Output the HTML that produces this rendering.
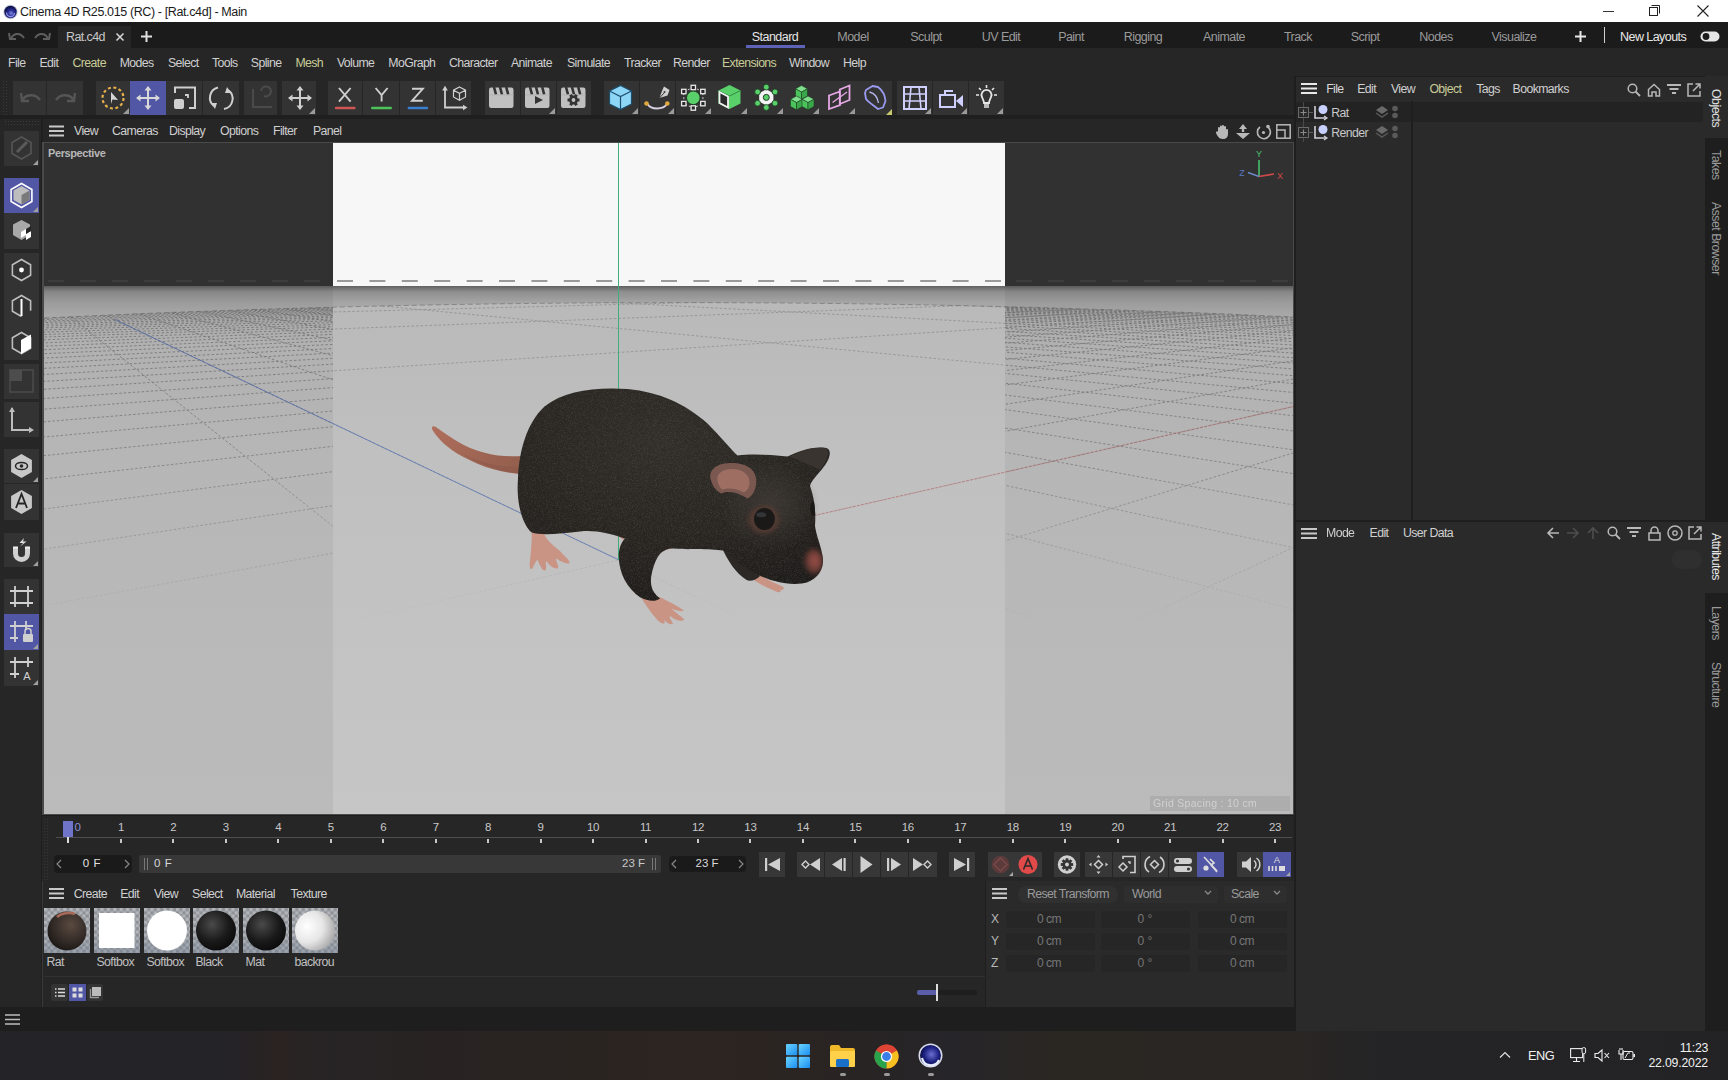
<!DOCTYPE html>
<html><head><meta charset="utf-8">
<style>
*{margin:0;padding:0;box-sizing:border-box}
html,body{width:1728px;height:1080px;overflow:hidden;background:#262626;font-family:"Liberation Sans",sans-serif;font-size:12px;color:#c8c8c8}
.a{position:absolute}
.t{position:absolute;white-space:nowrap;line-height:1}
svg{overflow:visible}
</style></head><body>

<div class="a" style="left:0px;top:0px;width:1728px;height:22px;background:#ffffff;"></div>
<svg class="a" style="left:2px;top:3px;" width="17" height="17" viewBox="0 0 17 17"><defs><radialGradient id="lg" cx="0.55" cy="0.6" r="0.55"><stop offset="0" stop-color="#8088e0"/><stop offset="0.45" stop-color="#2a2f98"/><stop offset="1" stop-color="#0c0f48"/></radialGradient></defs><circle cx="8.5" cy="9" r="7.2" fill="#c8cad8"/><circle cx="8.5" cy="9" r="6.2" fill="url(#lg)"/><path d="M4.5 9.5 A4 4 0 0 0 12.5 10" stroke="#aab0ff" stroke-width="1.3" fill="none" opacity="0.8"/></svg>
<div class="t" style="left:20px;top:5.5px;font-size:12.5px;letter-spacing:-0.38px;color:#1a1a1a;">Cinema 4D R25.015 (RC) - [Rat.c4d] - Main</div>
<div class="a" style="left:1603px;top:11px;width:11px;height:1px;background:#333;"></div>
<svg class="a" style="left:1649px;top:5px;" width="12" height="12" viewBox="0 0 12 12"><rect x="0.5" y="2.5" width="8" height="8" fill="none" stroke="#222" stroke-width="1"/><path d="M2.5 0.5 H10.5 V8.5" fill="none" stroke="#222" stroke-width="1"/></svg>
<svg class="a" style="left:1697px;top:5px;" width="12" height="12" viewBox="0 0 12 12"><path d="M0.5 0.5 L11.5 11.5 M11.5 0.5 L0.5 11.5" stroke="#222" stroke-width="1.1"/></svg>
<div class="a" style="left:0px;top:22px;width:1728px;height:26px;background:#1b1b1b;"></div>
<svg class="a" style="left:8px;top:31px;" width="18" height="10" viewBox="0 0 18 10"><path d="M3 8 C5 2, 12 1, 16 7" stroke="#5e5e5e" stroke-width="2" fill="none"/><path d="M1 2 L2 8 L8 8" stroke="#5e5e5e" stroke-width="2" fill="none"/></svg>
<svg class="a" style="left:33px;top:31px;" width="18" height="10" viewBox="0 0 18 10"><path d="M15 8 C13 2, 6 1, 2 7" stroke="#5e5e5e" stroke-width="2" fill="none"/><path d="M17 2 L16 8 L10 8" stroke="#5e5e5e" stroke-width="2" fill="none"/></svg>
<div class="a" style="left:58px;top:26px;width:73px;height:22px;background:#262626;"></div>
<div class="t" style="left:66px;top:30.5px;font-size:12.5px;letter-spacing:-0.6px;color:#c8c8c8;">Rat.c4d</div>
<svg class="a" style="left:116px;top:33px;" width="8" height="8" viewBox="0 0 8 8"><path d="M0.5 0.5 L7.5 7.5 M7.5 0.5 L0.5 7.5" stroke="#d8d8d8" stroke-width="1.5"/></svg>
<svg class="a" style="left:141px;top:31px;" width="11" height="11" viewBox="0 0 11 11"><path d="M5.5 0 V11 M0 5.5 H11" stroke="#e0e0e0" stroke-width="2"/></svg>
<div class="t" style="left:625px;width:300px;text-align:center;top:30.5px;font-size:12.5px;letter-spacing:-0.55px;color:#e6e6e6;">Standard</div>
<div class="t" style="left:703px;width:300px;text-align:center;top:30.5px;font-size:12.5px;letter-spacing:-0.55px;color:#9a9a9a;">Model</div>
<div class="t" style="left:776px;width:300px;text-align:center;top:30.5px;font-size:12.5px;letter-spacing:-0.55px;color:#9a9a9a;">Sculpt</div>
<div class="t" style="left:851px;width:300px;text-align:center;top:30.5px;font-size:12.5px;letter-spacing:-0.55px;color:#9a9a9a;">UV Edit</div>
<div class="t" style="left:921px;width:300px;text-align:center;top:30.5px;font-size:12.5px;letter-spacing:-0.55px;color:#9a9a9a;">Paint</div>
<div class="t" style="left:993px;width:300px;text-align:center;top:30.5px;font-size:12.5px;letter-spacing:-0.55px;color:#9a9a9a;">Rigging</div>
<div class="t" style="left:1074px;width:300px;text-align:center;top:30.5px;font-size:12.5px;letter-spacing:-0.55px;color:#9a9a9a;">Animate</div>
<div class="t" style="left:1148px;width:300px;text-align:center;top:30.5px;font-size:12.5px;letter-spacing:-0.55px;color:#9a9a9a;">Track</div>
<div class="t" style="left:1215px;width:300px;text-align:center;top:30.5px;font-size:12.5px;letter-spacing:-0.55px;color:#9a9a9a;">Script</div>
<div class="t" style="left:1286px;width:300px;text-align:center;top:30.5px;font-size:12.5px;letter-spacing:-0.55px;color:#9a9a9a;">Nodes</div>
<div class="t" style="left:1364px;width:300px;text-align:center;top:30.5px;font-size:12.5px;letter-spacing:-0.55px;color:#9a9a9a;">Visualize</div>
<div class="a" style="left:746px;top:45px;width:59px;height:3px;background:#5f63b8;"></div>
<svg class="a" style="left:1575px;top:31px;" width="11" height="11" viewBox="0 0 11 11"><path d="M5.5 0 V11 M0 5.5 H11" stroke="#e8e8e8" stroke-width="2"/></svg>
<div class="a" style="left:1604px;top:27px;width:1px;height:16px;background:#d0d0d0;"></div>
<div class="t" style="left:1620px;top:30.5px;font-size:12.5px;letter-spacing:-0.55px;color:#e8e8e8;">New Layouts</div>
<svg class="a" style="left:1700px;top:31px;" width="20" height="11" viewBox="0 0 20 11"><rect x="0.5" y="0.5" width="19" height="10" rx="5" fill="#e6e6e6"/><circle cx="6" cy="5.5" r="3.4" fill="#1b1b1b"/></svg>
<div class="a" style="left:0px;top:48px;width:1728px;height:71px;background:#262626;"></div>
<div class="t" style="left:8px;top:57.4px;font-size:12.3px;letter-spacing:-0.6px;color:#d0d0d0;">File</div>
<div class="t" style="left:39.5px;top:57.4px;font-size:12.3px;letter-spacing:-0.6px;color:#d0d0d0;">Edit</div>
<div class="t" style="left:72.6px;top:57.4px;font-size:12.3px;letter-spacing:-0.6px;color:#c9cc98;">Create</div>
<div class="t" style="left:119.7px;top:57.4px;font-size:12.3px;letter-spacing:-0.6px;color:#d0d0d0;">Modes</div>
<div class="t" style="left:168px;top:57.4px;font-size:12.3px;letter-spacing:-0.6px;color:#d0d0d0;">Select</div>
<div class="t" style="left:211.9px;top:57.4px;font-size:12.3px;letter-spacing:-0.6px;color:#d0d0d0;">Tools</div>
<div class="t" style="left:250.8px;top:57.4px;font-size:12.3px;letter-spacing:-0.6px;color:#d0d0d0;">Spline</div>
<div class="t" style="left:295.4px;top:57.4px;font-size:12.3px;letter-spacing:-0.6px;color:#c9cc98;">Mesh</div>
<div class="t" style="left:336.9px;top:57.4px;font-size:12.3px;letter-spacing:-0.6px;color:#d0d0d0;">Volume</div>
<div class="t" style="left:388.3px;top:57.4px;font-size:12.3px;letter-spacing:-0.6px;color:#d0d0d0;">MoGraph</div>
<div class="t" style="left:449px;top:57.4px;font-size:12.3px;letter-spacing:-0.6px;color:#d0d0d0;">Character</div>
<div class="t" style="left:511px;top:57.4px;font-size:12.3px;letter-spacing:-0.6px;color:#d0d0d0;">Animate</div>
<div class="t" style="left:567px;top:57.4px;font-size:12.3px;letter-spacing:-0.6px;color:#d0d0d0;">Simulate</div>
<div class="t" style="left:624px;top:57.4px;font-size:12.3px;letter-spacing:-0.6px;color:#d0d0d0;">Tracker</div>
<div class="t" style="left:673px;top:57.4px;font-size:12.3px;letter-spacing:-0.6px;color:#d0d0d0;">Render</div>
<div class="t" style="left:722px;top:57.4px;font-size:12.3px;letter-spacing:-0.6px;color:#c9cc98;">Extensions</div>
<div class="t" style="left:789px;top:57.4px;font-size:12.3px;letter-spacing:-0.6px;color:#d0d0d0;">Window</div>
<div class="t" style="left:843px;top:57.4px;font-size:12.3px;letter-spacing:-0.6px;color:#d0d0d0;">Help</div>
<svg class="a" style="left:2px;top:80px;" width="6" height="36" viewBox="0 0 6 36"><rect x="1" y="1" width="1" height="1" fill="#3a3a3a"/><rect x="1" y="4" width="1" height="1" fill="#3a3a3a"/><rect x="1" y="7" width="1" height="1" fill="#3a3a3a"/><rect x="1" y="10" width="1" height="1" fill="#3a3a3a"/><rect x="1" y="13" width="1" height="1" fill="#3a3a3a"/><rect x="1" y="16" width="1" height="1" fill="#3a3a3a"/><rect x="1" y="19" width="1" height="1" fill="#3a3a3a"/><rect x="1" y="22" width="1" height="1" fill="#3a3a3a"/><rect x="1" y="25" width="1" height="1" fill="#3a3a3a"/><rect x="1" y="28" width="1" height="1" fill="#3a3a3a"/><rect x="1" y="31" width="1" height="1" fill="#3a3a3a"/><rect x="1" y="34" width="1" height="1" fill="#3a3a3a"/><rect x="4" y="1" width="1" height="1" fill="#3a3a3a"/><rect x="4" y="4" width="1" height="1" fill="#3a3a3a"/><rect x="4" y="7" width="1" height="1" fill="#3a3a3a"/><rect x="4" y="10" width="1" height="1" fill="#3a3a3a"/><rect x="4" y="13" width="1" height="1" fill="#3a3a3a"/><rect x="4" y="16" width="1" height="1" fill="#3a3a3a"/><rect x="4" y="19" width="1" height="1" fill="#3a3a3a"/><rect x="4" y="22" width="1" height="1" fill="#3a3a3a"/><rect x="4" y="25" width="1" height="1" fill="#3a3a3a"/><rect x="4" y="28" width="1" height="1" fill="#3a3a3a"/><rect x="4" y="31" width="1" height="1" fill="#3a3a3a"/><rect x="4" y="34" width="1" height="1" fill="#3a3a3a"/></svg>
<div class="a" style="left:13px;top:81px;width:33px;height:34px;background:#333333;"></div>
<svg class="a" style="left:13px;top:81px;" width="33" height="34" viewBox="0 0 33 34"><path d="M9 20 C12 13, 22 12, 27 19" stroke="#555" stroke-width="2.4" fill="none"/><path d="M8 12 L9 20 L16 20" stroke="#555" stroke-width="2.4" fill="none"/></svg>
<div class="a" style="left:47px;top:81px;width:36px;height:34px;background:#333333;"></div>
<svg class="a" style="left:47px;top:81px;" width="36" height="34" viewBox="0 0 36 34"><path d="M27 20 C24 13, 14 12, 9 19" stroke="#555" stroke-width="2.4" fill="none"/><path d="M28 12 L27 20 L20 20" stroke="#555" stroke-width="2.4" fill="none"/></svg>
<div class="a" style="left:96px;top:81px;width:34px;height:34px;background:#333333;"></div>
<svg class="a" style="left:96px;top:81px;" width="34" height="34" viewBox="0 0 34 34"><circle cx="17" cy="17" r="10.5" stroke="#e8b04a" stroke-width="2.2" fill="none" stroke-dasharray="3 2.5"/><path d="M15 11 L22 19 L16.5 18.5 L15 23 Z" fill="#d6d6d6"/></svg>
<svg class="a" style="left:123px;top:108px;" width="6" height="6" viewBox="0 0 6 6"><path d="M6 0 V6 H0 Z" fill="#9a9a9a"/></svg>
<div class="a" style="left:130px;top:81px;width:36px;height:34px;background:#5257a5;"></div>
<svg class="a" style="left:130px;top:81px;" width="36" height="34" viewBox="0 0 36 34"><path d="M18 6 V28 M7 17 H29" stroke="#d8d8d8" stroke-width="2"/><path d="M18 5 L14.5 9.5 H21.5 Z M18 29 L14.5 24.5 H21.5 Z M6 17 L10.5 13.5 V20.5 Z M30 17 L25.5 13.5 V20.5 Z" fill="#d8d8d8"/></svg>
<div class="a" style="left:166px;top:81px;width:36px;height:34px;background:#333333;"></div>
<svg class="a" style="left:166px;top:81px;" width="36" height="34" viewBox="0 0 36 34"><path d="M9 12 V6.5 H29 V27 H23" stroke="#cfcfcf" stroke-width="2" fill="none"/><rect x="8" y="18" width="10" height="10" rx="2" fill="#cfcfcf"/><path d="M19 14 H22 V17" stroke="#cfcfcf" stroke-width="1.8" fill="none"/></svg>
<div class="a" style="left:203px;top:81px;width:36px;height:34px;background:#333333;"></div>
<svg class="a" style="left:203px;top:81px;" width="36" height="34" viewBox="0 0 36 34"><path d="M15 6.5 A10.5 10.5 0 0 0 11 25" stroke="#cfcfcf" stroke-width="2" fill="none"/><path d="M21 28 A10.5 10.5 0 0 0 25 9" stroke="#cfcfcf" stroke-width="2" fill="none"/><path d="M8 22 L12 28 L14 22 Z M28 12 L24 6 L22 12 Z" fill="#cfcfcf"/></svg>
<div class="a" style="left:244px;top:81px;width:33px;height:34px;background:#333333;"></div>
<svg class="a" style="left:244px;top:81px;" width="33" height="34" viewBox="0 0 33 34"><path d="M9 8 V26 H28" stroke="#4a4a4a" stroke-width="2" fill="none"/><path d="M20 15 A5 5 0 1 0 17 10" stroke="#4a4a4a" stroke-width="2" fill="none"/></svg>
<div class="a" style="left:282px;top:81px;width:34px;height:34px;background:#333333;"></div>
<svg class="a" style="left:282px;top:81px;" width="34" height="34" viewBox="0 0 34 34"><path d="M18 6 V28 M7 17 H29" stroke="#cfcfcf" stroke-width="2"/><path d="M18 5 L14.5 9.5 H21.5 Z M18 29 L14.5 24.5 H21.5 Z M6 17 L10.5 13.5 V20.5 Z M30 17 L25.5 13.5 V20.5 Z" fill="#cfcfcf"/></svg>
<svg class="a" style="left:309px;top:108px;" width="6" height="6" viewBox="0 0 6 6"><path d="M6 0 V6 H0 Z" fill="#9a9a9a"/></svg>
<div class="a" style="left:328px;top:81px;width:34px;height:34px;background:#333333;"></div>
<svg class="a" style="left:328px;top:81px;" width="34" height="34" viewBox="0 0 34 34"><path d="M11 7 L22.6 20.6 M22.6 7 L11 20.6" stroke="#cfcfcf" stroke-width="1.9"/><rect x="6.8" y="25.8" width="20.8" height="2.4" rx="1.2" fill="#d05656"/></svg>
<div class="a" style="left:363px;top:81px;width:36px;height:34px;background:#333333;"></div>
<svg class="a" style="left:363px;top:81px;" width="36" height="34" viewBox="0 0 36 34"><path d="M12.6 7 L18.6 14 L24.6 7 M18.6 14 V20.6" stroke="#cfcfcf" stroke-width="1.9" fill="none"/><rect x="8" y="25.8" width="21" height="2.4" rx="1.2" fill="#4cc45a"/></svg>
<div class="a" style="left:400px;top:81px;width:35px;height:34px;background:#333333;"></div>
<svg class="a" style="left:400px;top:81px;" width="35" height="34" viewBox="0 0 35 34"><path d="M12 7.8 H22.8 L12 19.8 H22.8" stroke="#cfcfcf" stroke-width="1.9" fill="none"/><rect x="7.6" y="25.8" width="20.6" height="2.4" rx="1.2" fill="#3a7ed0"/></svg>
<div class="a" style="left:436px;top:81px;width:35px;height:34px;background:#333333;"></div>
<svg class="a" style="left:436px;top:81px;" width="35" height="34" viewBox="0 0 35 34"><path d="M9 7 V26.5 H29" stroke="#cfcfcf" stroke-width="1.8" fill="none"/><path d="M6.2 9.5 L9 4.8 L11.8 9.5 Z M27 23.7 L31.5 26.5 L27 29.3 Z" fill="#cfcfcf"/><path d="M23.5 6 L29.5 9.2 V16 L23.5 19.2 L17.5 16 V9.2 Z M17.5 9.2 L23.5 12.4 L29.5 9.2 M23.5 12.4 V19.2" stroke="#cfcfcf" stroke-width="1.2" fill="none"/></svg>
<div class="a" style="left:485px;top:81px;width:35px;height:34px;background:#333333;"></div>
<svg class="a" style="left:485px;top:81px;" width="35" height="34" viewBox="0 0 35 34"><rect x="4" y="6.5" width="24.5" height="20.5" rx="2.2" fill="#c0c0c0"/><path d="M9 6 L11 13.5 M15 6 L17 13.5 M21.2 6 L23.2 13.5" stroke="#333" stroke-width="2.6"/><rect x="4" y="13.5" width="24.5" height="0.8" fill="#b0b0b0"/></svg>
<div class="a" style="left:521px;top:81px;width:35px;height:34px;background:#333333;"></div>
<svg class="a" style="left:521px;top:81px;" width="35" height="34" viewBox="0 0 35 34"><rect x="4" y="6.5" width="24.5" height="20.5" rx="2.2" fill="#c0c0c0"/><path d="M9 6 L11 13.5 M15 6 L17 13.5 M21.2 6 L23.2 13.5" stroke="#333" stroke-width="2.6"/><rect x="4" y="13.5" width="24.5" height="0.8" fill="#b0b0b0"/><path d="M14 15 L22 19 L14 23 Z" fill="#333"/></svg>
<svg class="a" style="left:549px;top:108px;" width="6" height="6" viewBox="0 0 6 6"><path d="M6 0 V6 H0 Z" fill="#9a9a9a"/></svg>
<div class="a" style="left:557px;top:81px;width:34px;height:34px;background:#333333;"></div>
<svg class="a" style="left:557px;top:81px;" width="34" height="34" viewBox="0 0 34 34"><rect x="4" y="6.5" width="24.5" height="20.5" rx="2.2" fill="#c0c0c0"/><path d="M9 6 L11 13.5 M15 6 L17 13.5 M21.2 6 L23.2 13.5" stroke="#333" stroke-width="2.6"/><rect x="4" y="13.5" width="24.5" height="0.8" fill="#b0b0b0"/><rect x="15" y="13" width="3" height="12" fill="#333" transform="rotate(30 16.5 19)"/><rect x="15" y="13" width="3" height="12" fill="#333" transform="rotate(90 16.5 19)"/><rect x="15" y="13" width="3" height="12" fill="#333" transform="rotate(150 16.5 19)"/><circle cx="16.5" cy="19" r="4.5" fill="#333"/><circle cx="16.5" cy="19" r="1.9" fill="#c0c0c0"/></svg>
<div class="a" style="left:604px;top:81px;width:35px;height:34px;background:#333333;"></div>
<svg class="a" style="left:604px;top:81px;" width="35" height="34" viewBox="0 0 35 34"><path d="M16.5 4.5 L27.5 10 V23 L16.5 28.5 L5.5 23 V10 Z" fill="#8ed6f6" stroke="#1d4e6e" stroke-width="1.2"/><path d="M5.5 10 L16.5 15.5 L27.5 10 M16.5 15.5 V28.5" stroke="#1d4e6e" stroke-width="1.2" fill="none"/></svg>
<svg class="a" style="left:632px;top:108px;" width="6" height="6" viewBox="0 0 6 6"><path d="M6 0 V6 H0 Z" fill="#9a9a9a"/></svg>
<div class="a" style="left:640px;top:81px;width:35px;height:34px;background:#333333;"></div>
<svg class="a" style="left:640px;top:81px;" width="35" height="34" viewBox="0 0 35 34"><path d="M7.5 23 C11 29, 23 29, 27 23" stroke="#d8d0e0" stroke-width="1.8" fill="none"/><circle cx="6.5" cy="22.5" r="2.3" fill="#e0a83c"/><circle cx="27.3" cy="22.5" r="2.3" fill="#e0a83c"/><path d="M24 5.5 L29.5 9 L27.5 14.5 L19.5 17 L22 10 Z" fill="#d0d0d0"/><path d="M19.5 17 L24.5 11.5" stroke="#333" stroke-width="1"/><circle cx="24.5" cy="11" r="1" fill="#333"/></svg>
<svg class="a" style="left:668px;top:108px;" width="6" height="6" viewBox="0 0 6 6"><path d="M6 0 V6 H0 Z" fill="#9a9a9a"/></svg>
<div class="a" style="left:676px;top:81px;width:36px;height:34px;background:#333333;"></div>
<svg class="a" style="left:676px;top:81px;" width="36" height="34" viewBox="0 0 36 34"><polygon points="17.3,6.5 26.9,10.5 26.9,22.6 17.3,27 7.8,22.6 7.8,10.5" fill="none" stroke="#cfcfcf" stroke-width="1" stroke-dasharray="2 2"/><circle cx="17.3" cy="16.8" r="6.8" fill="#5ad06a" stroke="#1e3a22" stroke-width="1"/><rect x="15.1" y="4.3" width="4.4" height="4.4" fill="#262626" stroke="#e8e8e8" stroke-width="1.3"/><rect x="24.7" y="8.3" width="4.4" height="4.4" fill="#262626" stroke="#e8e8e8" stroke-width="1.3"/><rect x="24.7" y="20.4" width="4.4" height="4.4" fill="#262626" stroke="#e8e8e8" stroke-width="1.3"/><rect x="15.1" y="24.8" width="4.4" height="4.4" fill="#262626" stroke="#e8e8e8" stroke-width="1.3"/><rect x="5.6" y="20.4" width="4.4" height="4.4" fill="#262626" stroke="#e8e8e8" stroke-width="1.3"/><rect x="5.6" y="8.3" width="4.4" height="4.4" fill="#262626" stroke="#e8e8e8" stroke-width="1.3"/></svg>
<svg class="a" style="left:705px;top:108px;" width="6" height="6" viewBox="0 0 6 6"><path d="M6 0 V6 H0 Z" fill="#9a9a9a"/></svg>
<div class="a" style="left:712px;top:81px;width:36px;height:34px;background:#333333;"></div>
<svg class="a" style="left:712px;top:81px;" width="36" height="34" viewBox="0 0 36 34"><path d="M17.5 4 L28.5 9.5 V22.5 L17.5 28 L6.5 22.5 V9.5 Z" fill="#5ad06a"/><path d="M6.5 9.5 L17.5 15 L28.5 9.5" stroke="#2e8a3e" stroke-width="1" fill="none"/><path d="M7.5 11 L16 15.5 V26.5 L7.5 22 Z" fill="#2a2a2a" stroke="#f0f0f0" stroke-width="1.8"/></svg>
<svg class="a" style="left:741px;top:108px;" width="6" height="6" viewBox="0 0 6 6"><path d="M6 0 V6 H0 Z" fill="#9a9a9a"/></svg>
<div class="a" style="left:748px;top:81px;width:36px;height:34px;background:#333333;"></div>
<svg class="a" style="left:748px;top:81px;" width="36" height="34" viewBox="0 0 36 34"><polygon points="25.4,20.5 18.3,24.6 11.2,20.5 11.2,12.3 18.3,8.2 25.4,12.3" fill="#f4f4f4"/><circle cx="18.3" cy="6.1" r="2.9" fill="#5ad06a" stroke="#1e3a22" stroke-width="0.8"/><circle cx="27" cy="10.9" r="2.9" fill="#5ad06a" stroke="#1e3a22" stroke-width="0.8"/><circle cx="27" cy="22.2" r="2.9" fill="#5ad06a" stroke="#1e3a22" stroke-width="0.8"/><circle cx="18.3" cy="26.5" r="2.9" fill="#5ad06a" stroke="#1e3a22" stroke-width="0.8"/><circle cx="9.6" cy="22.2" r="2.9" fill="#5ad06a" stroke="#1e3a22" stroke-width="0.8"/><circle cx="9.6" cy="10.9" r="2.9" fill="#5ad06a" stroke="#1e3a22" stroke-width="0.8"/><circle cx="18.3" cy="16.4" r="3" fill="#5ad06a" stroke="#1e3a22" stroke-width="1"/></svg>
<svg class="a" style="left:777px;top:108px;" width="6" height="6" viewBox="0 0 6 6"><path d="M6 0 V6 H0 Z" fill="#9a9a9a"/></svg>
<div class="a" style="left:784px;top:81px;width:36px;height:34px;background:#333333;"></div>
<svg class="a" style="left:784px;top:81px;" width="36" height="34" viewBox="0 0 36 34"><g stroke="#1e3a22" stroke-width="0.6"><path d="M17.5 4.5 L23.5 7.8 L17.5 11.1 L11.5 7.8 Z" fill="#7ee08c"/><path d="M11.5 7.8 L17.5 11.1 V18.3 L11.5 15.0 Z" fill="#4cc45c"/><path d="M17.5 11.1 L23.5 7.8 V15.0 L17.5 18.3 Z" fill="#3aa84a"/><path d="M12.5 15.0 L18.5 18.3 L12.5 21.6 L6.5 18.3 Z" fill="#7ee08c"/><path d="M6.5 18.3 L12.5 21.6 V28.8 L6.5 25.5 Z" fill="#4cc45c"/><path d="M12.5 21.6 L18.5 18.3 V25.5 L12.5 28.8 Z" fill="#3aa84a"/><path d="M24.0 15.0 L30.0 18.3 L24.0 21.6 L18.0 18.3 Z" fill="#7ee08c"/><path d="M18.0 18.3 L24.0 21.6 V28.8 L18.0 25.5 Z" fill="#4cc45c"/><path d="M24.0 21.6 L30.0 18.3 V25.5 L24.0 28.8 Z" fill="#3aa84a"/></g></svg>
<svg class="a" style="left:813px;top:108px;" width="6" height="6" viewBox="0 0 6 6"><path d="M6 0 V6 H0 Z" fill="#9a9a9a"/></svg>
<div class="a" style="left:820px;top:81px;width:36px;height:34px;background:#333333;"></div>
<svg class="a" style="left:820px;top:81px;" width="36" height="34" viewBox="0 0 36 34"><path d="M9 14.5 L20 10.5 V24 L9 28 Z M19.8 8.5 L29.5 4.5 V19 L19.8 23 Z" fill="none" stroke="#e6a8e6" stroke-width="1.8"/><path d="M12.5 21.5 L27 11" stroke="#e6a8e6" stroke-width="1.3"/></svg>
<svg class="a" style="left:849px;top:108px;" width="6" height="6" viewBox="0 0 6 6"><path d="M6 0 V6 H0 Z" fill="#9a9a9a"/></svg>
<div class="a" style="left:856px;top:81px;width:36px;height:34px;background:#333333;"></div>
<svg class="a" style="left:856px;top:81px;" width="36" height="34" viewBox="0 0 36 34"><path d="M10 9 L16.5 5 L22 6 C26 9, 29 14, 29.5 20 L27 26.5 L22 28 C17 24, 12 21, 10 18 L9 12 Z" fill="none" stroke="#9a9af0" stroke-width="1.8" stroke-linejoin="round"/><path d="M13.5 11 C18 12, 21.5 16, 22.5 22" stroke="#b8b8f0" stroke-width="1.3" fill="none"/></svg>
<svg class="a" style="left:886px;top:109px;" width="6" height="6" viewBox="0 0 6 6"><path d="M6 0 V6 H0 Z" fill="#c8c870"/></svg>
<div class="a" style="left:897px;top:81px;width:35px;height:34px;background:#333333;"></div>
<svg class="a" style="left:897px;top:81px;" width="35" height="34" viewBox="0 0 35 34"><path d="M7 6 H29 V28 H7 Z" fill="none" stroke="#d0d0ff" stroke-width="2"/><path d="M7 13 H29 M7 20 H29 M14 6 L12 28 M22 6 L24 28" stroke="#d0d0ff" stroke-width="1.6"/></svg>
<svg class="a" style="left:925px;top:108px;" width="6" height="6" viewBox="0 0 6 6"><path d="M6 0 V6 H0 Z" fill="#9a9a9a"/></svg>
<div class="a" style="left:933px;top:81px;width:35px;height:34px;background:#333333;"></div>
<svg class="a" style="left:933px;top:81px;" width="35" height="34" viewBox="0 0 35 34"><path d="M7 14 H22 V26 H7 Z" fill="none" stroke="#d0d0ff" stroke-width="2"/><path d="M12 14 V10 H20" stroke="#d0d0ff" stroke-width="2" fill="none"/><path d="M23 20 L30 14 V26 Z" fill="#d0d0ff"/></svg>
<svg class="a" style="left:961px;top:108px;" width="6" height="6" viewBox="0 0 6 6"><path d="M6 0 V6 H0 Z" fill="#9a9a9a"/></svg>
<div class="a" style="left:969px;top:81px;width:35px;height:34px;background:#333333;"></div>
<svg class="a" style="left:969px;top:81px;" width="35" height="34" viewBox="0 0 35 34"><path d="M13 16 A5 5 0 1 1 22 16 C21 19, 20 20, 20 22 H15 C15 20, 14 19, 13 16 Z" fill="none" stroke="#e6e6e6" stroke-width="1.8"/><path d="M15 24 H20 M15 26 H20" stroke="#e6e6e6" stroke-width="1.4"/><path d="M17.5 4 V7 M7 14 H10 M25 14 H28 M10 7 L12 9 M25 7 L23 9" stroke="#e6e6e6" stroke-width="1.6"/></svg>
<svg class="a" style="left:997px;top:108px;" width="6" height="6" viewBox="0 0 6 6"><path d="M6 0 V6 H0 Z" fill="#9a9a9a"/></svg>
<div class="a" style="left:0px;top:115px;width:1294px;height:4px;background:#1f1f1f;"></div>
<div class="a" style="left:0px;top:119px;width:41px;height:889px;background:#262626;"></div>
<div class="a" style="left:41px;top:119px;width:2px;height:889px;background:#1f1f1f;"></div>
<svg class="a" style="left:4px;top:120px;" width="36" height="6" viewBox="0 0 36 6"><rect x="1" y="1" width="1" height="1" fill="#3c3c3c"/><rect x="1" y="4" width="1" height="1" fill="#3c3c3c"/><rect x="4" y="1" width="1" height="1" fill="#3c3c3c"/><rect x="4" y="4" width="1" height="1" fill="#3c3c3c"/><rect x="7" y="1" width="1" height="1" fill="#3c3c3c"/><rect x="7" y="4" width="1" height="1" fill="#3c3c3c"/><rect x="10" y="1" width="1" height="1" fill="#3c3c3c"/><rect x="10" y="4" width="1" height="1" fill="#3c3c3c"/><rect x="13" y="1" width="1" height="1" fill="#3c3c3c"/><rect x="13" y="4" width="1" height="1" fill="#3c3c3c"/><rect x="16" y="1" width="1" height="1" fill="#3c3c3c"/><rect x="16" y="4" width="1" height="1" fill="#3c3c3c"/><rect x="19" y="1" width="1" height="1" fill="#3c3c3c"/><rect x="19" y="4" width="1" height="1" fill="#3c3c3c"/><rect x="22" y="1" width="1" height="1" fill="#3c3c3c"/><rect x="22" y="4" width="1" height="1" fill="#3c3c3c"/><rect x="25" y="1" width="1" height="1" fill="#3c3c3c"/><rect x="25" y="4" width="1" height="1" fill="#3c3c3c"/><rect x="28" y="1" width="1" height="1" fill="#3c3c3c"/><rect x="28" y="4" width="1" height="1" fill="#3c3c3c"/><rect x="31" y="1" width="1" height="1" fill="#3c3c3c"/><rect x="31" y="4" width="1" height="1" fill="#3c3c3c"/><rect x="34" y="1" width="1" height="1" fill="#3c3c3c"/><rect x="34" y="4" width="1" height="1" fill="#3c3c3c"/></svg>
<div class="a" style="left:4px;top:131px;width:35px;height:35px;background:#333333;"></div>
<svg class="a" style="left:4px;top:131px;" width="35" height="35" viewBox="0 0 35 35"><polygon points="17.5,28.0 8.0,22.5 8.0,11.5 17.5,6.0 27.0,11.5 27.0,22.5" fill="none" stroke="#555" stroke-width="1.6"/><path d="M13 21 L23 11" stroke="#5a5a5a" stroke-width="3"/></svg>
<svg class="a" style="left:33px;top:160px;" width="5" height="5" viewBox="0 0 5 5"><path d="M5 0 V5 H0 Z" fill="#a0a0a0"/></svg>
<div class="a" style="left:4px;top:178px;width:35px;height:35px;background:#5257a5;"></div>
<svg class="a" style="left:4px;top:178px;" width="35" height="35" viewBox="0 0 35 35"><polygon points="17.5,29.5 7.1,23.5 7.1,11.5 17.5,5.5 27.9,11.5 27.9,23.5" fill="none" stroke="#fff" stroke-width="1.6"/><path d="M17.5 8 L25.5 12.5 V22 L17.5 26.5 L9.5 22 V12.5 Z" fill="#bdbdbd"/><path d="M17.5 17 L25.5 12.5 V22 L17.5 26.5 Z" fill="#7a7a7a"/></svg>
<svg class="a" style="left:33px;top:207px;" width="5" height="5" viewBox="0 0 5 5"><path d="M5 0 V5 H0 Z" fill="#a0a0a0"/></svg>
<div class="a" style="left:4px;top:213px;width:35px;height:36px;background:#333333;"></div>
<svg class="a" style="left:4px;top:213px;" width="35" height="36" viewBox="0 0 35 36"><path d="M17.5 7 L26 11.5 V22 L17.5 27 L9 22 V11.5 Z" fill="#a8a8a8"/><path d="M17 19 L22 16 V22 L17 25 Z M22 21 L27 18 V24 L22 27 Z" fill="#fff"/><path d="M22 16 L27 13 V18 L22 21 Z" fill="#262626"/></svg>
<div class="a" style="left:4px;top:253px;width:35px;height:34px;background:#333333;"></div>
<svg class="a" style="left:4px;top:253px;" width="35" height="34" viewBox="0 0 35 34"><polygon points="17.5,27.5 8.4,22.2 8.4,11.8 17.5,6.5 26.6,11.7 26.6,22.2" fill="none" stroke="#bdbdbd" stroke-width="1.6"/><circle cx="17.5" cy="17" r="2.4" fill="#fff"/></svg>
<div class="a" style="left:4px;top:287px;width:35px;height:38px;background:#333333;"></div>
<svg class="a" style="left:4px;top:287px;" width="35" height="38" viewBox="0 0 35 38"><polyline points="17.5,29.5 8.4,24.2 8.4,13.8 17.5,8.5 26.6,13.7 26.6,24.2" fill="none" stroke="#bdbdbd" stroke-width="1.6" stroke-dasharray="52 12"/><rect x="16.5" y="12" width="2" height="17" fill="#fff"/></svg>
<div class="a" style="left:4px;top:325px;width:35px;height:35px;background:#333333;"></div>
<svg class="a" style="left:4px;top:325px;" width="35" height="35" viewBox="0 0 35 35"><polygon points="17.5,28.5 8.4,23.2 8.4,12.8 17.5,7.5 26.6,12.7 26.6,23.2" fill="none" stroke="#bdbdbd" stroke-width="1.6"/><path d="M17 15 L27 9.5 V23 L17 29 Z" fill="#fff"/></svg>
<div class="a" style="left:4px;top:364px;width:35px;height:35px;background:#333333;"></div>
<svg class="a" style="left:4px;top:364px;" width="35" height="35" viewBox="0 0 35 35"><rect x="6" y="6" width="23" height="22" fill="none" stroke="#4a4a4a" stroke-width="1.6"/><rect x="6" y="6" width="12" height="11" fill="#4d4d4d"/></svg>
<div class="a" style="left:4px;top:402px;width:35px;height:35px;background:#333333;"></div>
<svg class="a" style="left:4px;top:402px;" width="35" height="35" viewBox="0 0 35 35"><path d="M8 6 V28 H28" stroke="#bdbdbd" stroke-width="2" fill="none"/><path d="M5 10 L8 5 L11 10 Z M25 25 L30 28 L25 31 Z" fill="#bdbdbd"/></svg>
<div class="a" style="left:4px;top:449px;width:35px;height:34px;background:#333333;"></div>
<svg class="a" style="left:4px;top:449px;" width="35" height="34" viewBox="0 0 35 34"><polygon points="17.5,29.0 7.1,23.0 7.1,11.0 17.5,5.0 27.9,11.0 27.9,23.0" fill="#c8c8c8"/><ellipse cx="17.5" cy="17" rx="6" ry="3.6" fill="none" stroke="#262626" stroke-width="1.5"/><circle cx="17.5" cy="17" r="1.8" fill="#262626"/></svg>
<svg class="a" style="left:33px;top:477px;" width="5" height="5" viewBox="0 0 5 5"><path d="M5 0 V5 H0 Z" fill="#a0a0a0"/></svg>
<div class="a" style="left:4px;top:484px;width:35px;height:36px;background:#333333;"></div>
<svg class="a" style="left:4px;top:484px;" width="35" height="36" viewBox="0 0 35 36"><polygon points="17.5,30.0 7.1,24.0 7.1,12.0 17.5,6.0 27.9,12.0 27.9,24.0" fill="#c8c8c8"/><path d="M12 24 L17.5 10 L23 24 M14 19.5 H21" stroke="#262626" stroke-width="1.8" fill="none"/></svg>
<div class="a" style="left:4px;top:533px;width:35px;height:34px;background:#333333;"></div>
<svg class="a" style="left:4px;top:533px;" width="35" height="34" viewBox="0 0 35 34"><path d="M11.5 15 V20.5 A6 6 0 0 0 23.5 20.5 V15" stroke="#d0d0d0" stroke-width="5" fill="none"/><path d="M9 14.5 H14 M21 14.5 H26" stroke="#f0f0f0" stroke-width="2.2"/><path d="M20 5 L15.5 10 H19 L16 13.5 L22.5 8.5 H19 Z" fill="#e0e0e0"/></svg>
<svg class="a" style="left:33px;top:561px;" width="5" height="5" viewBox="0 0 5 5"><path d="M5 0 V5 H0 Z" fill="#a0a0a0"/></svg>
<div class="a" style="left:4px;top:579px;width:35px;height:35px;background:#333333;"></div>
<svg class="a" style="left:4px;top:579px;" width="35" height="35" viewBox="0 0 35 35"><path d="M11 7 V28 M24 7 V28 M6 12 H29 M6 24 H29" stroke="#d0d0d0" stroke-width="1.8"/></svg>
<div class="a" style="left:4px;top:614px;width:35px;height:36px;background:#5257a5;"></div>
<svg class="a" style="left:4px;top:614px;" width="35" height="36" viewBox="0 0 35 36"><path d="M11 7 V28 M22 7 V16 M6 12 H29 M6 24 H14" stroke="#d0d0d0" stroke-width="1.8"/><rect x="19" y="20" width="10" height="8" rx="1" fill="#d0d0d0"/><path d="M21 20 V17.5 A3 3 0 0 1 27 17.5 V20" stroke="#d0d0d0" stroke-width="1.5" fill="none"/></svg>
<svg class="a" style="left:33px;top:644px;" width="5" height="5" viewBox="0 0 5 5"><path d="M5 0 V5 H0 Z" fill="#a0a0a0"/></svg>
<div class="a" style="left:4px;top:650px;width:35px;height:36px;background:#333333;"></div>
<svg class="a" style="left:4px;top:650px;" width="35" height="36" viewBox="0 0 35 36"><path d="M11 7 V28 M24 7 V17 M6 12 H29 M6 24 H15" stroke="#d0d0d0" stroke-width="1.8"/><text x="23" y="30" font-family="Liberation Sans" font-size="11" fill="#d0d0d0" text-anchor="middle">A</text></svg>
<svg class="a" style="left:33px;top:680px;" width="5" height="5" viewBox="0 0 5 5"><path d="M5 0 V5 H0 Z" fill="#a0a0a0"/></svg>
<div class="a" style="left:43px;top:119px;width:1251px;height:23px;background:#262626;"></div>
<svg class="a" style="left:49px;top:125px;" width="15" height="12" viewBox="0 0 15 12"><path d="M0 1.5 H15 M0 6 H15 M0 10.5 H15" stroke="#c8c8c8" stroke-width="1.8"/></svg>
<div class="t" style="left:74px;top:124.6px;font-size:12.3px;letter-spacing:-0.6px;color:#d0d0d0;">View</div>
<div class="t" style="left:112px;top:124.6px;font-size:12.3px;letter-spacing:-0.6px;color:#d0d0d0;">Cameras</div>
<div class="t" style="left:169px;top:124.6px;font-size:12.3px;letter-spacing:-0.6px;color:#d0d0d0;">Display</div>
<div class="t" style="left:220px;top:124.6px;font-size:12.3px;letter-spacing:-0.6px;color:#d0d0d0;">Options</div>
<div class="t" style="left:273px;top:124.6px;font-size:12.3px;letter-spacing:-0.6px;color:#d0d0d0;">Filter</div>
<div class="t" style="left:313px;top:124.6px;font-size:12.3px;letter-spacing:-0.6px;color:#d0d0d0;">Panel</div>
<svg class="a" style="left:1215px;top:124px;" width="15" height="15" viewBox="0 0 15 15"><path d="M3 8 V4 A1 1 0 0 1 5 4 V7 V2.5 A1 1 0 0 1 7 2.5 V7 V2 A1 1 0 0 1 9 2 V7 V3 A1 1 0 0 1 11 3 V8 V6 A1 1 0 0 1 13 6 V10 C13 13, 11 15, 8 15 C5 15, 4 14, 2 11 L1 9 A1 1 0 0 1 3 8 Z" fill="#b8b8b8"/></svg>
<svg class="a" style="left:1236px;top:124px;" width="14" height="15" viewBox="0 0 14 15"><path d="M7 0 L11 5 H8.2 V8 H5.8 V5 H3 Z M0 9 H14 L7 15 Z" fill="#b8b8b8"/></svg>
<svg class="a" style="left:1256px;top:124px;" width="15" height="15" viewBox="0 0 15 15"><path d="M4 3 A6.5 6.5 0 1 0 11 2.5" stroke="#b8b8b8" stroke-width="1.6" fill="none"/><circle cx="12" cy="2.5" r="1.8" fill="#b8b8b8"/><circle cx="7.5" cy="8.5" r="1.6" fill="#b8b8b8"/></svg>
<svg class="a" style="left:1276px;top:124px;" width="15" height="15" viewBox="0 0 15 15"><rect x="0.8" y="0.8" width="13.4" height="13.4" fill="none" stroke="#b8b8b8" stroke-width="1.5"/><path d="M1 6 H9 V14" stroke="#b8b8b8" stroke-width="1.5" fill="none"/></svg>
<div class="a" style="left:42px;top:142px;width:1252px;height:673px;background:#4a4a4a;"></div>
<div class="a" style="left:44px;top:143px;width:1249px;height:671px;background:#bcbcbc;"></div>
<div class="a" style="left:44px;top:143px;width:1249px;height:143px;background:#313131;"></div>
<div class="a" style="left:333px;top:143px;width:672px;height:143px;background:#f7f7f7;"></div>
<svg class="a" style="left:0px;top:0px;" width="1728" height="1080" viewBox="0 0 1728 1080"><rect x="337.0" y="280" width="16" height="2" fill="#9a9a9a"/><rect x="369.4" y="280" width="16" height="2" fill="#9a9a9a"/><rect x="401.8" y="280" width="16" height="2" fill="#9a9a9a"/><rect x="434.2" y="280" width="16" height="2" fill="#9a9a9a"/><rect x="466.6" y="280" width="16" height="2" fill="#9a9a9a"/><rect x="499.0" y="280" width="16" height="2" fill="#9a9a9a"/><rect x="531.4" y="280" width="16" height="2" fill="#9a9a9a"/><rect x="563.8" y="280" width="16" height="2" fill="#9a9a9a"/><rect x="596.2" y="280" width="16" height="2" fill="#9a9a9a"/><rect x="628.6" y="280" width="16" height="2" fill="#9a9a9a"/><rect x="661.0" y="280" width="16" height="2" fill="#9a9a9a"/><rect x="693.4" y="280" width="16" height="2" fill="#9a9a9a"/><rect x="725.8" y="280" width="16" height="2" fill="#9a9a9a"/><rect x="758.2" y="280" width="16" height="2" fill="#9a9a9a"/><rect x="790.6" y="280" width="16" height="2" fill="#9a9a9a"/><rect x="823.0" y="280" width="16" height="2" fill="#9a9a9a"/><rect x="855.4" y="280" width="16" height="2" fill="#9a9a9a"/><rect x="887.8" y="280" width="16" height="2" fill="#9a9a9a"/><rect x="920.2" y="280" width="16" height="2" fill="#9a9a9a"/><rect x="952.6" y="280" width="16" height="2" fill="#9a9a9a"/><rect x="985.0" y="280" width="16" height="2" fill="#9a9a9a"/><rect x="48" y="280" width="16" height="2" fill="#3d3d3d"/><rect x="80" y="280" width="16" height="2" fill="#3d3d3d"/><rect x="112" y="280" width="16" height="2" fill="#3d3d3d"/><rect x="144" y="280" width="16" height="2" fill="#3d3d3d"/><rect x="176" y="280" width="16" height="2" fill="#3d3d3d"/><rect x="208" y="280" width="16" height="2" fill="#3d3d3d"/><rect x="240" y="280" width="16" height="2" fill="#3d3d3d"/><rect x="272" y="280" width="16" height="2" fill="#3d3d3d"/><rect x="304" y="280" width="16" height="2" fill="#3d3d3d"/><rect x="1016" y="280" width="16" height="2" fill="#3d3d3d"/><rect x="1048" y="280" width="16" height="2" fill="#3d3d3d"/><rect x="1080" y="280" width="16" height="2" fill="#3d3d3d"/><rect x="1112" y="280" width="16" height="2" fill="#3d3d3d"/><rect x="1144" y="280" width="16" height="2" fill="#3d3d3d"/><rect x="1176" y="280" width="16" height="2" fill="#3d3d3d"/><rect x="1208" y="280" width="16" height="2" fill="#3d3d3d"/><rect x="1240" y="280" width="16" height="2" fill="#3d3d3d"/><rect x="1272" y="280" width="16" height="2" fill="#3d3d3d"/></svg>
<svg class="a" style="left:0px;top:0px;" width="1728" height="1080" viewBox="0 0 1728 1080"><defs>
<linearGradient id="hz" gradientUnits="userSpaceOnUse" x1="0" y1="286" x2="0" y2="318">
<stop offset="0" stop-color="#606060"/><stop offset="0.18" stop-color="#8e8e8e"/><stop offset="0.5" stop-color="#a4a4a4"/><stop offset="1" stop-color="#b4b4b4"/></linearGradient>
<linearGradient id="fl" gradientUnits="userSpaceOnUse" x1="0" y1="300" x2="0" y2="814">
<stop offset="0" stop-color="#b9b9b9"/><stop offset="0.3" stop-color="#c0c0c0"/><stop offset="1" stop-color="#c6c6c6"/></linearGradient>
<linearGradient id="dense" gradientUnits="userSpaceOnUse" x1="0" y1="305" x2="0" y2="345">
<stop offset="0" stop-color="#6a6a6a" stop-opacity="0.3"/><stop offset="0.4" stop-color="#8a8a8a" stop-opacity="0.15"/><stop offset="1" stop-color="#b0b0b0" stop-opacity="0"/></linearGradient>
<clipPath id="arcclip"><polygon points="44,814 44,318.0 69,316.8 94,315.7 119,314.6 144,313.5 169,312.5 194,311.6 219,310.7 244,309.8 269,309.0 294,308.3 319,307.6 344,306.9 369,306.3 394,305.7 419,305.2 444,304.7 469,304.3 494,303.9 519,303.6 544,303.3 569,303.1 594,302.9 619,302.7 644,302.7 669,302.6 694,302.6 719,302.7 744,302.8 769,302.9 794,303.1 819,303.4 844,303.6 869,304.0 894,304.4 919,304.8 944,305.3 969,305.8 994,306.4 1019,307.0 1044,307.7 1069,308.4 1094,309.2 1119,310.0 1144,310.9 1169,311.8 1194,312.7 1219,313.7 1244,314.8 1269,315.9 1293,317.0 1293,814"/></clipPath>
</defs>
<rect x="44" y="286" width="1249" height="40" fill="url(#hz)"/>
<polygon points="44,814 44,318.0 69,316.8 94,315.7 119,314.6 144,313.5 169,312.5 194,311.6 219,310.7 244,309.8 269,309.0 294,308.3 319,307.6 344,306.9 369,306.3 394,305.7 419,305.2 444,304.7 469,304.3 494,303.9 519,303.6 544,303.3 569,303.1 594,302.9 619,302.7 644,302.7 669,302.6 694,302.6 719,302.7 744,302.8 769,302.9 794,303.1 819,303.4 844,303.6 869,304.0 894,304.4 919,304.8 944,305.3 969,305.8 994,306.4 1019,307.0 1044,307.7 1069,308.4 1094,309.2 1119,310.0 1144,310.9 1169,311.8 1194,312.7 1219,313.7 1244,314.8 1269,315.9 1293,317.0 1293,814" fill="url(#fl)"/>
<g clip-path="url(#arcclip)"><rect x="44" y="300" width="289" height="45" fill="url(#dense)"/><rect x="1005" y="300" width="288" height="45" fill="url(#dense)"/></g>
<polyline points="44,318.0 69,316.8 94,315.7 119,314.6 144,313.5 169,312.5 194,311.6 219,310.7 244,309.8 269,309.0 294,308.3 319,307.6 344,306.9 369,306.3 394,305.7 419,305.2 444,304.7 469,304.3 494,303.9 519,303.6 544,303.3 569,303.1 594,302.9 619,302.7 644,302.7 669,302.6 694,302.6 719,302.7 744,302.8 769,302.9 794,303.1 819,303.4 844,303.6 869,304.0 894,304.4 919,304.8 944,305.3 969,305.8 994,306.4 1019,307.0 1044,307.7 1069,308.4 1094,309.2 1119,310.0 1144,310.9 1169,311.8 1194,312.7 1219,313.7 1244,314.8 1269,315.9 1293,317.0" fill="none" stroke="#6a6a6a" stroke-width="1" stroke-dasharray="5 3" opacity="0.6"/>
</svg>
<svg class="a" style="left:0px;top:0px;" width="1728" height="1080" viewBox="0 0 1728 1080"><defs><clipPath id="fcl"><rect x="44" y="290" width="289" height="524"/></clipPath><clipPath id="fcr"><rect x="1005" y="290" width="288" height="524"/></clipPath><clipPath id="fcc"><rect x="333" y="290" width="672" height="524"/></clipPath><linearGradient id="gm" gradientUnits="userSpaceOnUse" x1="0" y1="314" x2="0" y2="625"><stop offset="0" stop-color="#fff" stop-opacity="1"/><stop offset="0.5" stop-color="#fff" stop-opacity="0.85"/><stop offset="0.82" stop-color="#fff" stop-opacity="0.3"/><stop offset="1" stop-color="#fff" stop-opacity="0"/></linearGradient><mask id="gmask" maskUnits="userSpaceOnUse" x="0" y="0" width="1728" height="1080"><rect x="0" y="290" width="1728" height="360" fill="url(#gm)"/></mask></defs><g clip-path="url(#arcclip)"><g mask="url(#gmask)" stroke="#5a5a5a" stroke-width="0.9" stroke-dasharray="2.5 2" fill="none"><g clip-path="url(#fcl)" opacity="0.62"><g id="sideg"><line x1="2024.8" y1="1876.6" x2="19.9" y2="276.5"/><line x1="1967.8" y1="1203.3" x2="24.5" y2="276.5"/><line x1="1944.5" y1="927.8" x2="29.1" y2="276.5"/><line x1="1931.9" y1="778.0" x2="33.6" y2="276.5"/><line x1="1923.9" y1="683.9" x2="38.2" y2="276.4"/><line x1="1918.4" y1="619.2" x2="42.7" y2="276.4"/><line x1="1914.5" y1="572.0" x2="47.2" y2="276.4"/><line x1="1911.4" y1="536.1" x2="51.7" y2="276.4"/><line x1="1909.0" y1="507.9" x2="56.1" y2="276.4"/><line x1="1907.1" y1="485.1" x2="60.5" y2="276.4"/><line x1="1905.5" y1="466.3" x2="64.9" y2="276.4"/><line x1="1904.2" y1="450.5" x2="69.3" y2="276.3"/><line x1="1903.0" y1="437.1" x2="73.7" y2="276.3"/><line x1="1902.1" y1="425.5" x2="78.0" y2="276.3"/><line x1="1901.2" y1="415.5" x2="82.4" y2="276.3"/><line x1="1900.5" y1="406.7" x2="86.7" y2="276.3"/><line x1="1899.8" y1="398.9" x2="91.0" y2="276.3"/><line x1="1899.2" y1="391.9" x2="95.2" y2="276.3"/><line x1="1898.7" y1="385.7" x2="99.5" y2="276.3"/><line x1="1898.2" y1="380.1" x2="103.7" y2="276.2"/><line x1="1897.8" y1="375.0" x2="107.9" y2="276.2"/><line x1="1897.4" y1="370.3" x2="112.1" y2="276.2"/><line x1="1897.0" y1="366.1" x2="116.2" y2="276.2"/><line x1="1896.7" y1="362.2" x2="120.4" y2="276.2"/><line x1="1896.4" y1="358.6" x2="124.5" y2="276.2"/><line x1="1896.1" y1="355.3" x2="128.6" y2="276.2"/><line x1="1895.9" y1="352.2" x2="132.7" y2="276.2"/><line x1="1895.6" y1="349.3" x2="136.8" y2="276.1"/><line x1="1895.4" y1="346.7" x2="140.8" y2="276.1"/><line x1="1895.2" y1="344.2" x2="144.8" y2="276.1"/><line x1="1895.0" y1="341.8" x2="148.9" y2="276.1"/><line x1="1894.8" y1="339.6" x2="152.8" y2="276.1"/><line x1="1894.6" y1="337.6" x2="156.8" y2="276.1"/><line x1="1894.5" y1="335.7" x2="160.8" y2="276.1"/><line x1="1894.3" y1="333.8" x2="164.7" y2="276.1"/><line x1="1894.2" y1="332.1" x2="168.6" y2="276.1"/><line x1="1894.0" y1="330.5" x2="172.5" y2="276.0"/><line x1="1893.9" y1="328.9" x2="176.4" y2="276.0"/><line x1="1893.8" y1="327.4" x2="180.3" y2="276.0"/><line x1="1893.7" y1="326.0" x2="184.1" y2="276.0"/><line x1="1893.5" y1="324.7" x2="188.0" y2="276.0"/><line x1="1893.4" y1="323.5" x2="191.8" y2="276.0"/><line x1="1893.3" y1="322.2" x2="195.6" y2="276.0"/><line x1="1893.2" y1="321.1" x2="199.4" y2="276.0"/><line x1="1893.1" y1="320.0" x2="203.1" y2="276.0"/><line x1="1893.1" y1="318.9" x2="206.9" y2="275.9"/><line x1="1893.0" y1="317.9" x2="210.6" y2="275.9"/><line x1="1892.9" y1="316.9" x2="214.3" y2="275.9"/><line x1="1892.8" y1="316.0" x2="218.0" y2="275.9"/><line x1="1892.7" y1="315.1" x2="221.7" y2="275.9"/><line x1="1892.7" y1="314.3" x2="225.4" y2="275.9"/><line x1="1892.6" y1="313.4" x2="229.0" y2="275.9"/><line x1="1892.5" y1="312.6" x2="232.7" y2="275.9"/><line x1="1892.5" y1="311.9" x2="236.3" y2="275.9"/><line x1="1892.4" y1="311.1" x2="239.9" y2="275.8"/><line x1="1892.3" y1="310.4" x2="243.5" y2="275.8"/><line x1="1892.3" y1="309.7" x2="247.0" y2="275.8"/><line x1="1892.2" y1="309.1" x2="250.6" y2="275.8"/><line x1="1892.2" y1="308.4" x2="254.1" y2="275.8"/><line x1="1892.1" y1="307.8" x2="257.7" y2="275.8"/><line x1="1892.1" y1="307.2" x2="261.2" y2="275.8"/><line x1="1892.0" y1="306.6" x2="264.7" y2="275.8"/><line x1="1892.0" y1="306.1" x2="268.2" y2="275.8"/><line x1="1891.9" y1="305.5" x2="271.6" y2="275.8"/><line x1="1891.9" y1="305.0" x2="275.1" y2="275.7"/><line x1="1891.8" y1="304.5" x2="278.5" y2="275.7"/><line x1="1891.8" y1="304.0" x2="281.9" y2="275.7"/><line x1="1891.7" y1="303.5" x2="285.3" y2="275.7"/><line x1="1891.7" y1="303.0" x2="288.7" y2="275.7"/><line x1="1891.7" y1="302.6" x2="292.1" y2="275.7"/><line x1="1891.6" y1="302.1" x2="295.5" y2="275.7"/><line x1="1891.6" y1="301.7" x2="298.8" y2="275.7"/><line x1="1891.6" y1="301.3" x2="302.1" y2="275.7"/><line x1="1891.5" y1="300.9" x2="305.5" y2="275.7"/><line x1="1891.5" y1="300.5" x2="308.8" y2="275.6"/><line x1="1891.5" y1="300.1" x2="312.1" y2="275.6"/><line x1="1891.4" y1="299.7" x2="315.4" y2="275.6"/><line x1="1891.4" y1="299.4" x2="318.6" y2="275.6"/><line x1="1891.4" y1="299.0" x2="321.9" y2="275.6"/><line x1="1891.3" y1="298.7" x2="325.1" y2="275.6"/><line x1="1891.3" y1="298.3" x2="328.3" y2="275.6"/><line x1="1891.3" y1="298.0" x2="331.5" y2="275.6"/><line x1="1891.3" y1="297.7" x2="334.7" y2="275.6"/><line x1="1891.2" y1="297.3" x2="337.9" y2="275.6"/><line x1="1891.2" y1="297.0" x2="341.1" y2="275.5"/><line x1="1891.2" y1="296.7" x2="344.3" y2="275.5"/><line x1="1891.2" y1="296.4" x2="347.4" y2="275.5"/><line x1="1891.1" y1="296.2" x2="350.6" y2="275.5"/><line x1="1891.1" y1="295.9" x2="353.7" y2="275.5"/><line x1="1891.1" y1="295.6" x2="356.8" y2="275.5"/><line x1="1891.1" y1="295.3" x2="359.9" y2="275.5"/><line x1="1891.0" y1="295.1" x2="363.0" y2="275.5"/><line x1="1891.0" y1="294.8" x2="366.0" y2="275.5"/><line x1="1891.0" y1="294.6" x2="369.1" y2="275.5"/><line x1="1891.0" y1="294.3" x2="372.1" y2="275.5"/><line x1="1891.0" y1="294.1" x2="375.2" y2="275.4"/><line x1="1890.9" y1="293.8" x2="378.2" y2="275.4"/><line x1="1890.9" y1="293.6" x2="381.2" y2="275.4"/><line x1="1890.9" y1="293.4" x2="384.2" y2="275.4"/><line x1="1890.9" y1="293.1" x2="387.2" y2="275.4"/><line x1="1890.9" y1="292.9" x2="390.2" y2="275.4"/><line x1="1890.8" y1="292.7" x2="393.1" y2="275.4"/><line x1="1890.8" y1="292.5" x2="396.1" y2="275.4"/><line x1="1890.8" y1="292.3" x2="399.0" y2="275.4"/><line x1="1890.8" y1="292.1" x2="402.0" y2="275.4"/><line x1="1890.8" y1="291.9" x2="404.9" y2="275.4"/><line x1="1890.8" y1="291.7" x2="407.8" y2="275.4"/><line x1="1890.7" y1="291.5" x2="410.7" y2="275.3"/><line x1="1890.7" y1="291.3" x2="413.6" y2="275.3"/><line x1="1890.7" y1="291.1" x2="416.4" y2="275.3"/><line x1="1890.7" y1="291.0" x2="419.3" y2="275.3"/><line x1="1890.7" y1="290.8" x2="422.1" y2="275.3"/><line x1="1890.7" y1="290.6" x2="425.0" y2="275.3"/><line x1="1890.6" y1="290.4" x2="427.8" y2="275.3"/><line x1="1890.6" y1="290.3" x2="430.6" y2="275.3"/><line x1="1890.6" y1="290.1" x2="433.4" y2="275.3"/><line x1="1890.6" y1="289.9" x2="436.2" y2="275.3"/><line x1="1890.6" y1="289.8" x2="439.0" y2="275.3"/><line x1="1890.6" y1="289.6" x2="441.8" y2="275.3"/><line x1="1890.6" y1="289.5" x2="444.5" y2="275.2"/><line x1="1890.5" y1="289.3" x2="447.3" y2="275.2"/><line x1="1890.5" y1="289.2" x2="450.0" y2="275.2"/><line x1="1890.5" y1="289.0" x2="452.8" y2="275.2"/><line x1="1890.5" y1="288.9" x2="455.5" y2="275.2"/><line x1="1890.5" y1="288.7" x2="458.2" y2="275.2"/><line x1="1890.5" y1="288.6" x2="460.9" y2="275.2"/><line x1="1890.5" y1="288.5" x2="463.6" y2="275.2"/><line x1="1890.5" y1="288.3" x2="466.3" y2="275.2"/><line x1="1890.5" y1="288.2" x2="468.9" y2="275.2"/><line x1="1890.4" y1="288.1" x2="471.6" y2="275.2"/><line x1="1890.4" y1="287.9" x2="474.3" y2="275.2"/><line x1="1890.4" y1="287.8" x2="476.9" y2="275.1"/><line x1="1890.4" y1="287.7" x2="479.5" y2="275.1"/><line x1="1890.4" y1="287.5" x2="482.1" y2="275.1"/><line x1="1890.4" y1="287.4" x2="484.8" y2="275.1"/><line x1="1890.4" y1="287.3" x2="487.4" y2="275.1"/><line x1="1890.4" y1="287.2" x2="490.0" y2="275.1"/><line x1="1890.4" y1="287.1" x2="492.5" y2="275.1"/><line x1="1890.3" y1="286.9" x2="495.1" y2="275.1"/><line x1="1890.3" y1="286.8" x2="497.7" y2="275.1"/><line x1="1890.3" y1="286.7" x2="500.2" y2="275.1"/><line x1="1890.3" y1="286.6" x2="502.8" y2="275.1"/><line x1="1890.3" y1="286.5" x2="505.3" y2="275.1"/><line x1="1890.3" y1="286.4" x2="507.8" y2="275.1"/><line x1="1890.3" y1="286.3" x2="510.3" y2="275.1"/><line x1="1890.3" y1="286.2" x2="512.9" y2="275.0"/><line x1="1890.3" y1="286.1" x2="515.4" y2="275.0"/><line x1="1890.3" y1="286.0" x2="517.8" y2="275.0"/><line x1="1890.3" y1="285.9" x2="520.3" y2="275.0"/><line x1="1890.3" y1="285.8" x2="522.8" y2="275.0"/><line x1="1890.2" y1="285.7" x2="525.3" y2="275.0"/><line x1="1890.2" y1="285.6" x2="527.7" y2="275.0"/><line x1="1890.2" y1="285.5" x2="530.2" y2="275.0"/><line x1="1890.2" y1="285.4" x2="532.6" y2="275.0"/><line x1="1890.2" y1="285.3" x2="535.0" y2="275.0"/><line x1="1890.2" y1="285.2" x2="537.4" y2="275.0"/><line x1="1890.2" y1="285.1" x2="539.9" y2="275.0"/><line x1="1890.2" y1="285.0" x2="542.3" y2="275.0"/><line x1="1890.2" y1="284.9" x2="544.6" y2="275.0"/><line x1="1890.2" y1="284.9" x2="547.0" y2="274.9"/><line x1="1890.2" y1="284.8" x2="549.4" y2="274.9"/><line x1="1890.2" y1="284.7" x2="551.8" y2="274.9"/><line x1="1890.2" y1="284.6" x2="554.1" y2="274.9"/><line x1="1890.1" y1="284.5" x2="556.5" y2="274.9"/><line x1="1890.1" y1="284.4" x2="558.8" y2="274.9"/><line x1="1890.1" y1="284.4" x2="561.2" y2="274.9"/><line x1="1890.1" y1="284.3" x2="563.5" y2="274.9"/><line x1="1890.1" y1="284.2" x2="565.8" y2="274.9"/><line x1="1890.1" y1="284.1" x2="568.1" y2="274.9"/><line x1="1890.1" y1="284.0" x2="570.4" y2="274.9"/><line x1="1890.1" y1="284.0" x2="572.7" y2="274.9"/><line x1="1890.1" y1="283.9" x2="575.0" y2="274.9"/><line x1="1890.1" y1="283.8" x2="577.3" y2="274.9"/><line x1="1890.1" y1="283.7" x2="579.5" y2="274.8"/><line x1="1890.1" y1="283.7" x2="581.8" y2="274.8"/><line x1="1890.1" y1="283.6" x2="584.1" y2="274.8"/><line x1="1890.1" y1="283.5" x2="586.3" y2="274.8"/><line x1="1890.1" y1="283.5" x2="588.6" y2="274.8"/><line x1="1890.0" y1="283.4" x2="590.8" y2="274.8"/><line x1="1890.0" y1="283.3" x2="593.0" y2="274.8"/><line x1="1890.0" y1="283.3" x2="595.2" y2="274.8"/><line x1="1890.0" y1="283.2" x2="597.4" y2="274.8"/><line x1="1890.0" y1="283.1" x2="599.6" y2="274.8"/><line x1="1890.0" y1="283.1" x2="601.8" y2="274.8"/><line x1="1890.0" y1="283.0" x2="604.0" y2="274.8"/><line x1="1890.0" y1="282.9" x2="606.2" y2="274.8"/><line x1="1890.0" y1="282.9" x2="608.4" y2="274.8"/><line x1="1890.0" y1="282.8" x2="610.5" y2="274.8"/><line x1="1890.0" y1="282.7" x2="612.7" y2="274.8"/><line x1="1890.0" y1="282.7" x2="614.8" y2="274.7"/><line x1="1890.0" y1="282.6" x2="617.0" y2="274.7"/><line x1="1890.0" y1="282.6" x2="619.1" y2="274.7"/><line x1="1890.0" y1="282.5" x2="621.2" y2="274.7"/><line x1="1890.0" y1="282.4" x2="623.4" y2="274.7"/><line x1="1890.0" y1="282.4" x2="625.5" y2="274.7"/><line x1="1890.0" y1="282.3" x2="627.6" y2="274.7"/><line x1="1890.0" y1="282.3" x2="629.7" y2="274.7"/><line x1="1889.9" y1="282.2" x2="631.8" y2="274.7"/><line x1="1889.9" y1="282.1" x2="633.9" y2="274.7"/><line x1="1889.9" y1="282.1" x2="635.9" y2="274.7"/><line x1="1889.9" y1="282.0" x2="638.0" y2="274.7"/><line x1="1889.9" y1="282.0" x2="640.1" y2="274.7"/><line x1="1889.9" y1="281.9" x2="642.1" y2="274.7"/><line x1="1889.9" y1="281.9" x2="644.2" y2="274.7"/><line x1="1889.9" y1="281.8" x2="646.2" y2="274.7"/><line x1="1889.9" y1="281.8" x2="648.3" y2="274.6"/><line x1="1889.9" y1="281.7" x2="650.3" y2="274.6"/><line x1="1889.9" y1="281.7" x2="652.3" y2="274.6"/><line x1="1889.9" y1="281.6" x2="654.3" y2="274.6"/><line x1="1889.9" y1="281.6" x2="656.4" y2="274.6"/><line x1="1889.9" y1="281.5" x2="658.4" y2="274.6"/><line x1="1889.9" y1="281.5" x2="660.4" y2="274.6"/><line x1="1889.9" y1="281.4" x2="662.3" y2="274.6"/><line x1="1889.9" y1="281.4" x2="664.3" y2="274.6"/><line x1="1889.9" y1="281.3" x2="666.3" y2="274.6"/><line x1="1889.9" y1="281.3" x2="668.3" y2="274.6"/><line x1="1889.9" y1="281.2" x2="670.3" y2="274.6"/><line x1="1889.9" y1="281.2" x2="672.2" y2="274.6"/><line x1="1889.9" y1="281.1" x2="674.2" y2="274.6"/><line x1="1889.9" y1="281.1" x2="676.1" y2="274.6"/><line x1="1889.8" y1="281.0" x2="678.1" y2="274.6"/><line x1="1889.8" y1="281.0" x2="680.0" y2="274.6"/><line x1="1889.8" y1="281.0" x2="681.9" y2="274.5"/><line x1="1889.8" y1="280.9" x2="683.8" y2="274.5"/><line x1="1889.8" y1="280.9" x2="685.8" y2="274.5"/><line x1="1889.8" y1="280.8" x2="687.7" y2="274.5"/><line x1="1889.8" y1="280.8" x2="689.6" y2="274.5"/><line x1="1889.8" y1="280.7" x2="691.5" y2="274.5"/><line x1="1889.8" y1="280.7" x2="693.4" y2="274.5"/><line x1="1889.8" y1="280.6" x2="695.3" y2="274.5"/><line x1="1889.8" y1="280.6" x2="697.1" y2="274.5"/><line x1="1889.8" y1="280.6" x2="699.0" y2="274.5"/><line x1="1889.8" y1="280.5" x2="700.9" y2="274.5"/><line x1="1889.8" y1="280.5" x2="702.7" y2="274.5"/><line x1="1889.8" y1="280.4" x2="704.6" y2="274.5"/><line x1="1889.8" y1="280.4" x2="706.4" y2="274.5"/><line x1="1889.8" y1="280.4" x2="708.3" y2="274.5"/><line x1="1889.8" y1="280.3" x2="710.1" y2="274.5"/><line x1="1889.8" y1="280.3" x2="712.0" y2="274.5"/><line x1="1889.8" y1="280.2" x2="713.8" y2="274.5"/><line x1="1889.8" y1="280.2" x2="715.6" y2="274.4"/><line x1="1889.8" y1="280.2" x2="717.4" y2="274.4"/><line x1="1889.8" y1="280.1" x2="719.2" y2="274.4"/><line x1="1889.8" y1="280.1" x2="721.1" y2="274.4"/><line x1="1889.8" y1="280.1" x2="722.9" y2="274.4"/><line x1="1889.8" y1="280.0" x2="724.6" y2="274.4"/><line x1="1889.8" y1="280.0" x2="726.4" y2="274.4"/><line x1="1889.8" y1="280.0" x2="728.2" y2="274.4"/><line x1="1889.8" y1="279.9" x2="730.0" y2="274.4"/><line x1="1889.8" y1="279.9" x2="731.8" y2="274.4"/><line x1="1889.7" y1="279.8" x2="733.5" y2="274.4"/><line x1="1889.7" y1="279.8" x2="735.3" y2="274.4"/><line x1="1889.7" y1="279.8" x2="737.1" y2="274.4"/><line x1="1889.7" y1="279.7" x2="738.8" y2="274.4"/><line x1="1889.7" y1="279.7" x2="740.6" y2="274.4"/><line x1="1889.7" y1="279.7" x2="742.3" y2="274.4"/><line x1="1889.7" y1="279.6" x2="744.0" y2="274.4"/><line x1="1889.7" y1="279.6" x2="745.8" y2="274.4"/><line x1="1889.7" y1="279.6" x2="747.5" y2="274.4"/><line x1="1889.7" y1="279.5" x2="749.2" y2="274.3"/><line x1="1889.7" y1="279.5" x2="750.9" y2="274.3"/><line x1="1889.7" y1="279.5" x2="752.6" y2="274.3"/><line x1="1889.7" y1="279.4" x2="754.3" y2="274.3"/><line x1="1889.7" y1="279.4" x2="756.0" y2="274.3"/><line x1="1889.7" y1="279.4" x2="757.7" y2="274.3"/><line x1="1889.7" y1="279.3" x2="759.4" y2="274.3"/><line x1="1889.7" y1="279.3" x2="761.1" y2="274.3"/><line x1="1889.7" y1="279.3" x2="762.8" y2="274.3"/><line x1="1889.7" y1="279.3" x2="764.5" y2="274.3"/><line x1="1889.7" y1="279.2" x2="766.1" y2="274.3"/><line x1="1889.7" y1="279.2" x2="767.8" y2="274.3"/><line x1="1889.7" y1="279.2" x2="769.4" y2="274.3"/><line x1="1889.7" y1="279.1" x2="771.1" y2="274.3"/><line x1="1889.7" y1="279.1" x2="772.7" y2="274.3"/><line x1="1889.7" y1="279.1" x2="774.4" y2="274.3"/><line x1="1889.7" y1="279.0" x2="776.0" y2="274.3"/><line x1="1889.7" y1="279.0" x2="777.7" y2="274.3"/><line x1="1889.7" y1="279.0" x2="779.3" y2="274.3"/><line x1="1889.7" y1="279.0" x2="780.9" y2="274.3"/><line x1="1889.7" y1="278.9" x2="782.5" y2="274.3"/><line x1="1889.7" y1="278.9" x2="784.2" y2="274.2"/><line x1="1889.7" y1="278.9" x2="785.8" y2="274.2"/><line x1="1889.7" y1="278.8" x2="787.4" y2="274.2"/><line x1="1889.7" y1="278.8" x2="789.0" y2="274.2"/><line x1="1889.7" y1="278.8" x2="790.6" y2="274.2"/><line x1="1889.7" y1="278.8" x2="792.2" y2="274.2"/><line x1="1889.7" y1="278.7" x2="793.8" y2="274.2"/><line x1="1889.7" y1="278.7" x2="795.3" y2="274.2"/><line x1="1889.6" y1="278.7" x2="796.9" y2="274.2"/><line x1="1889.6" y1="278.7" x2="798.5" y2="274.2"/><line x1="1889.6" y1="278.6" x2="800.1" y2="274.2"/><line x1="1889.6" y1="278.6" x2="801.6" y2="274.2"/><line x1="1889.6" y1="278.6" x2="803.2" y2="274.2"/><line x1="1889.6" y1="278.6" x2="804.7" y2="274.2"/><line x1="1889.6" y1="278.5" x2="806.3" y2="274.2"/><line x1="1889.6" y1="278.5" x2="807.8" y2="274.2"/><line x1="1889.6" y1="278.5" x2="809.4" y2="274.2"/><line x1="1889.6" y1="278.5" x2="810.9" y2="274.2"/><line x1="1889.6" y1="278.4" x2="812.5" y2="274.2"/><line x1="1889.6" y1="278.4" x2="814.0" y2="274.2"/><line x1="1889.6" y1="278.4" x2="815.5" y2="274.2"/><line x1="1889.6" y1="278.4" x2="817.0" y2="274.1"/><line x1="2426.1" y1="6622.6" x2="1889.6" y2="278.4"/><line x1="-4686.2" y1="6622.6" x2="1881.4" y2="278.3"/><line x1="-11798.5" y1="6622.6" x2="1873.3" y2="278.3"/><line x1="-18910.8" y1="6622.6" x2="1865.2" y2="278.3"/><line x1="-12222.1" y1="3482.1" x2="1857.2" y2="278.2"/><line x1="-4181.9" y1="1372.0" x2="1849.3" y2="278.2"/><line x1="-2518.4" y1="935.4" x2="1841.5" y2="278.2"/><line x1="-1799.6" y1="746.7" x2="1833.7" y2="278.1"/><line x1="-1398.7" y1="641.5" x2="1826.0" y2="278.1"/><line x1="-1143.1" y1="574.4" x2="1818.3" y2="278.1"/><line x1="-965.8" y1="527.9" x2="1810.7" y2="278.0"/><line x1="-835.7" y1="493.7" x2="1803.2" y2="278.0"/><line x1="-736.1" y1="467.6" x2="1795.7" y2="278.0"/><line x1="-657.4" y1="447.0" x2="1788.3" y2="278.0"/><line x1="-593.7" y1="430.2" x2="1781.0" y2="277.9"/><line x1="-541.0" y1="416.4" x2="1773.7" y2="277.9"/><line x1="-496.8" y1="404.8" x2="1766.5" y2="277.9"/><line x1="-459.1" y1="394.9" x2="1759.3" y2="277.8"/><line x1="-426.6" y1="386.4" x2="1752.2" y2="277.8"/><line x1="-398.3" y1="378.9" x2="1745.2" y2="277.8"/><line x1="-373.4" y1="372.4" x2="1738.2" y2="277.8"/><line x1="-351.3" y1="366.6" x2="1731.3" y2="277.7"/><line x1="-331.7" y1="361.5" x2="1724.4" y2="277.7"/><line x1="-314.0" y1="356.8" x2="1717.6" y2="277.7"/><line x1="-298.1" y1="352.6" x2="1710.8" y2="277.7"/><line x1="-283.6" y1="348.8" x2="1704.1" y2="277.6"/><line x1="-270.4" y1="345.4" x2="1697.4" y2="277.6"/><line x1="-258.4" y1="342.2" x2="1690.8" y2="277.6"/><line x1="-247.3" y1="339.3" x2="1684.3" y2="277.5"/><line x1="-237.1" y1="336.6" x2="1677.8" y2="277.5"/><line x1="-227.7" y1="334.2" x2="1671.3" y2="277.5"/><line x1="-218.9" y1="331.9" x2="1664.9" y2="277.5"/><line x1="-210.8" y1="329.7" x2="1658.5" y2="277.4"/><line x1="-203.2" y1="327.8" x2="1652.2" y2="277.4"/><line x1="-196.1" y1="325.9" x2="1646.0" y2="277.4"/><line x1="-189.5" y1="324.1" x2="1639.8" y2="277.4"/><line x1="-183.3" y1="322.5" x2="1633.6" y2="277.3"/><line x1="-177.4" y1="321.0" x2="1627.5" y2="277.3"/><line x1="-171.9" y1="319.5" x2="1621.4" y2="277.3"/><line x1="-166.7" y1="318.2" x2="1615.4" y2="277.3"/><line x1="-161.8" y1="316.9" x2="1609.4" y2="277.3"/><line x1="-157.1" y1="315.7" x2="1603.5" y2="277.2"/><line x1="-152.7" y1="314.5" x2="1597.6" y2="277.2"/><line x1="-148.5" y1="313.4" x2="1591.7" y2="277.2"/><line x1="-144.5" y1="312.3" x2="1585.9" y2="277.2"/><line x1="-140.7" y1="311.3" x2="1580.2" y2="277.1"/><line x1="-137.1" y1="310.4" x2="1574.4" y2="277.1"/><line x1="-133.7" y1="309.5" x2="1568.8" y2="277.1"/><line x1="-130.4" y1="308.6" x2="1563.1" y2="277.1"/><line x1="-127.2" y1="307.8" x2="1557.5" y2="277.1"/><line x1="-124.2" y1="307.0" x2="1552.0" y2="277.0"/><line x1="-121.3" y1="306.3" x2="1546.4" y2="277.0"/><line x1="-118.6" y1="305.5" x2="1541.0" y2="277.0"/><line x1="-115.9" y1="304.8" x2="1535.5" y2="277.0"/><line x1="-113.4" y1="304.2" x2="1530.1" y2="276.9"/><line x1="-110.9" y1="303.5" x2="1524.8" y2="276.9"/><line x1="-108.5" y1="302.9" x2="1519.4" y2="276.9"/><line x1="-106.3" y1="302.3" x2="1514.1" y2="276.9"/><line x1="-104.1" y1="301.7" x2="1508.9" y2="276.9"/><line x1="-102.0" y1="301.2" x2="1503.7" y2="276.8"/><line x1="-99.9" y1="300.6" x2="1498.5" y2="276.8"/><line x1="-98.0" y1="300.1" x2="1493.4" y2="276.8"/><line x1="-96.1" y1="299.6" x2="1488.3" y2="276.8"/><line x1="-94.2" y1="299.1" x2="1483.2" y2="276.8"/><line x1="-92.5" y1="298.7" x2="1478.1" y2="276.7"/><line x1="-90.8" y1="298.2" x2="1473.1" y2="276.7"/><line x1="-89.1" y1="297.8" x2="1468.2" y2="276.7"/><line x1="-87.5" y1="297.4" x2="1463.2" y2="276.7"/><line x1="-85.9" y1="297.0" x2="1458.3" y2="276.7"/><line x1="-84.4" y1="296.6" x2="1453.5" y2="276.6"/><line x1="-83.0" y1="296.2" x2="1448.6" y2="276.6"/><line x1="-81.5" y1="295.8" x2="1443.8" y2="276.6"/><line x1="-80.2" y1="295.5" x2="1439.1" y2="276.6"/><line x1="-78.8" y1="295.1" x2="1434.3" y2="276.6"/><line x1="-77.5" y1="294.8" x2="1429.6" y2="276.5"/><line x1="-76.3" y1="294.4" x2="1424.9" y2="276.5"/><line x1="-75.0" y1="294.1" x2="1420.3" y2="276.5"/><line x1="-73.8" y1="293.8" x2="1415.7" y2="276.5"/><line x1="-72.7" y1="293.5" x2="1411.1" y2="276.5"/><line x1="-71.5" y1="293.2" x2="1406.5" y2="276.5"/><line x1="-70.4" y1="292.9" x2="1402.0" y2="276.4"/><line x1="-69.3" y1="292.6" x2="1397.5" y2="276.4"/><line x1="-68.3" y1="292.3" x2="1393.0" y2="276.4"/><line x1="-67.3" y1="292.1" x2="1388.6" y2="276.4"/><line x1="-66.3" y1="291.8" x2="1384.2" y2="276.4"/><line x1="-65.3" y1="291.6" x2="1379.8" y2="276.4"/><line x1="-64.4" y1="291.3" x2="1375.5" y2="276.3"/><line x1="-63.4" y1="291.1" x2="1371.1" y2="276.3"/><line x1="-62.5" y1="290.8" x2="1366.8" y2="276.3"/><line x1="-61.6" y1="290.6" x2="1362.6" y2="276.3"/><line x1="-60.8" y1="290.4" x2="1358.3" y2="276.3"/><line x1="-59.9" y1="290.1" x2="1354.1" y2="276.3"/><line x1="-59.1" y1="289.9" x2="1349.9" y2="276.2"/><line x1="-58.3" y1="289.7" x2="1345.7" y2="276.2"/><line x1="-57.5" y1="289.5" x2="1341.6" y2="276.2"/><line x1="-56.7" y1="289.3" x2="1337.5" y2="276.2"/><line x1="-56.0" y1="289.1" x2="1333.4" y2="276.2"/><line x1="-55.3" y1="288.9" x2="1329.3" y2="276.2"/><line x1="-54.5" y1="288.7" x2="1325.3" y2="276.1"/><line x1="-53.8" y1="288.5" x2="1321.3" y2="276.1"/><line x1="-53.1" y1="288.4" x2="1317.3" y2="276.1"/><line x1="-52.5" y1="288.2" x2="1313.3" y2="276.1"/><line x1="-51.8" y1="288.0" x2="1309.4" y2="276.1"/><line x1="-51.1" y1="287.8" x2="1305.5" y2="276.1"/><line x1="-50.5" y1="287.7" x2="1301.6" y2="276.0"/><line x1="-49.9" y1="287.5" x2="1297.7" y2="276.0"/><line x1="-49.3" y1="287.3" x2="1293.8" y2="276.0"/><line x1="-48.7" y1="287.2" x2="1290.0" y2="276.0"/><line x1="-48.1" y1="287.0" x2="1286.2" y2="276.0"/><line x1="-47.5" y1="286.9" x2="1282.4" y2="276.0"/><line x1="-46.9" y1="286.7" x2="1278.7" y2="276.0"/><line x1="-46.4" y1="286.6" x2="1274.9" y2="275.9"/><line x1="-45.8" y1="286.4" x2="1271.2" y2="275.9"/><line x1="-45.3" y1="286.3" x2="1267.5" y2="275.9"/><line x1="-44.8" y1="286.2" x2="1263.9" y2="275.9"/><line x1="-44.2" y1="286.0" x2="1260.2" y2="275.9"/><line x1="-43.7" y1="285.9" x2="1256.6" y2="275.9"/><line x1="-43.2" y1="285.8" x2="1253.0" y2="275.9"/><line x1="-42.7" y1="285.6" x2="1249.4" y2="275.8"/><line x1="-42.3" y1="285.5" x2="1245.8" y2="275.8"/><line x1="-41.8" y1="285.4" x2="1242.3" y2="275.8"/><line x1="-41.3" y1="285.3" x2="1238.8" y2="275.8"/><line x1="-40.9" y1="285.1" x2="1235.3" y2="275.8"/><line x1="-40.4" y1="285.0" x2="1231.8" y2="275.8"/><line x1="-40.0" y1="284.9" x2="1228.3" y2="275.8"/><line x1="-39.5" y1="284.8" x2="1224.9" y2="275.7"/><line x1="-39.1" y1="284.7" x2="1221.5" y2="275.7"/><line x1="-38.7" y1="284.6" x2="1218.0" y2="275.7"/><line x1="-38.3" y1="284.5" x2="1214.7" y2="275.7"/><line x1="-37.9" y1="284.3" x2="1211.3" y2="275.7"/><line x1="-37.5" y1="284.2" x2="1207.9" y2="275.7"/><line x1="-37.1" y1="284.1" x2="1204.6" y2="275.7"/><line x1="-36.7" y1="284.0" x2="1201.3" y2="275.7"/><line x1="-36.3" y1="283.9" x2="1198.0" y2="275.6"/><line x1="-35.9" y1="283.8" x2="1194.7" y2="275.6"/><line x1="-35.5" y1="283.7" x2="1191.5" y2="275.6"/><line x1="-35.2" y1="283.6" x2="1188.2" y2="275.6"/><line x1="-34.8" y1="283.5" x2="1185.0" y2="275.6"/><line x1="-34.5" y1="283.5" x2="1181.8" y2="275.6"/><line x1="-34.1" y1="283.4" x2="1178.6" y2="275.6"/><line x1="-33.8" y1="283.3" x2="1175.5" y2="275.6"/><line x1="-33.4" y1="283.2" x2="1172.3" y2="275.5"/><line x1="-33.1" y1="283.1" x2="1169.2" y2="275.5"/><line x1="-32.8" y1="283.0" x2="1166.1" y2="275.5"/><line x1="-32.4" y1="282.9" x2="1163.0" y2="275.5"/><line x1="-32.1" y1="282.8" x2="1159.9" y2="275.5"/><line x1="-31.8" y1="282.8" x2="1156.8" y2="275.5"/><line x1="-31.5" y1="282.7" x2="1153.8" y2="275.5"/><line x1="-31.2" y1="282.6" x2="1150.7" y2="275.5"/><line x1="-30.9" y1="282.5" x2="1147.7" y2="275.4"/><line x1="-30.6" y1="282.4" x2="1144.7" y2="275.4"/><line x1="-30.3" y1="282.4" x2="1141.7" y2="275.4"/><line x1="-30.0" y1="282.3" x2="1138.7" y2="275.4"/><line x1="-29.7" y1="282.2" x2="1135.8" y2="275.4"/><line x1="-29.4" y1="282.1" x2="1132.8" y2="275.4"/><line x1="-29.1" y1="282.1" x2="1129.9" y2="275.4"/><line x1="-28.9" y1="282.0" x2="1127.0" y2="275.4"/><line x1="-28.6" y1="281.9" x2="1124.1" y2="275.4"/><line x1="-28.3" y1="281.8" x2="1121.2" y2="275.3"/><line x1="-28.0" y1="281.8" x2="1118.4" y2="275.3"/><line x1="-27.8" y1="281.7" x2="1115.5" y2="275.3"/><line x1="-27.5" y1="281.6" x2="1112.7" y2="275.3"/><line x1="-27.3" y1="281.6" x2="1109.9" y2="275.3"/><line x1="-27.0" y1="281.5" x2="1107.1" y2="275.3"/><line x1="-26.8" y1="281.4" x2="1104.3" y2="275.3"/><line x1="-26.5" y1="281.4" x2="1101.5" y2="275.3"/><line x1="-26.3" y1="281.3" x2="1098.7" y2="275.3"/><line x1="-26.0" y1="281.2" x2="1096.0" y2="275.2"/><line x1="-25.8" y1="281.2" x2="1093.2" y2="275.2"/><line x1="-25.6" y1="281.1" x2="1090.5" y2="275.2"/><line x1="-25.3" y1="281.1" x2="1087.8" y2="275.2"/><line x1="-25.1" y1="281.0" x2="1085.1" y2="275.2"/><line x1="-24.9" y1="280.9" x2="1082.4" y2="275.2"/><line x1="-24.7" y1="280.9" x2="1079.8" y2="275.2"/><line x1="-24.4" y1="280.8" x2="1077.1" y2="275.2"/><line x1="-24.2" y1="280.8" x2="1074.5" y2="275.2"/><line x1="-24.0" y1="280.7" x2="1071.8" y2="275.1"/><line x1="-23.8" y1="280.7" x2="1069.2" y2="275.1"/><line x1="-23.6" y1="280.6" x2="1066.6" y2="275.1"/><line x1="-23.4" y1="280.5" x2="1064.0" y2="275.1"/><line x1="-23.2" y1="280.5" x2="1061.5" y2="275.1"/><line x1="-23.0" y1="280.4" x2="1058.9" y2="275.1"/><line x1="-22.8" y1="280.4" x2="1056.3" y2="275.1"/><line x1="-22.6" y1="280.3" x2="1053.8" y2="275.1"/><line x1="-22.4" y1="280.3" x2="1051.3" y2="275.1"/><line x1="-22.2" y1="280.2" x2="1048.8" y2="275.1"/><line x1="-22.0" y1="280.2" x2="1046.3" y2="275.0"/><line x1="-21.8" y1="280.1" x2="1043.8" y2="275.0"/><line x1="-21.6" y1="280.1" x2="1041.3" y2="275.0"/><line x1="-21.4" y1="280.0" x2="1038.8" y2="275.0"/><line x1="-21.2" y1="280.0" x2="1036.4" y2="275.0"/><line x1="-21.0" y1="279.9" x2="1033.9" y2="275.0"/><line x1="-20.9" y1="279.9" x2="1031.5" y2="275.0"/><line x1="-20.7" y1="279.8" x2="1029.1" y2="275.0"/><line x1="-20.5" y1="279.8" x2="1026.7" y2="275.0"/><line x1="-20.3" y1="279.7" x2="1024.3" y2="275.0"/><line x1="-20.2" y1="279.7" x2="1021.9" y2="275.0"/><line x1="-20.0" y1="279.7" x2="1019.5" y2="274.9"/><line x1="-19.8" y1="279.6" x2="1017.2" y2="274.9"/><line x1="-19.6" y1="279.6" x2="1014.8" y2="274.9"/><line x1="-19.5" y1="279.5" x2="1012.5" y2="274.9"/><line x1="-19.3" y1="279.5" x2="1010.1" y2="274.9"/><line x1="-19.2" y1="279.4" x2="1007.8" y2="274.9"/><line x1="-19.0" y1="279.4" x2="1005.5" y2="274.9"/><line x1="-18.8" y1="279.4" x2="1003.2" y2="274.9"/><line x1="-18.7" y1="279.3" x2="1000.9" y2="274.9"/><line x1="-18.5" y1="279.3" x2="998.6" y2="274.9"/><line x1="-18.4" y1="279.2" x2="996.4" y2="274.9"/><line x1="-18.2" y1="279.2" x2="994.1" y2="274.8"/><line x1="-18.1" y1="279.2" x2="991.9" y2="274.8"/><line x1="-17.9" y1="279.1" x2="989.6" y2="274.8"/><line x1="-17.8" y1="279.1" x2="987.4" y2="274.8"/><line x1="-17.6" y1="279.0" x2="985.2" y2="274.8"/><line x1="-17.5" y1="279.0" x2="983.0" y2="274.8"/><line x1="-17.3" y1="279.0" x2="980.8" y2="274.8"/><line x1="-17.2" y1="278.9" x2="978.6" y2="274.8"/><line x1="-17.0" y1="278.9" x2="976.4" y2="274.8"/><line x1="-16.9" y1="278.8" x2="974.3" y2="274.8"/><line x1="-16.8" y1="278.8" x2="972.1" y2="274.8"/><line x1="-16.6" y1="278.8" x2="970.0" y2="274.7"/><line x1="-16.5" y1="278.7" x2="967.8" y2="274.7"/><line x1="-16.3" y1="278.7" x2="965.7" y2="274.7"/><line x1="-16.2" y1="278.7" x2="963.6" y2="274.7"/><line x1="-16.1" y1="278.6" x2="961.5" y2="274.7"/><line x1="-15.9" y1="278.6" x2="959.4" y2="274.7"/><line x1="-15.8" y1="278.6" x2="957.3" y2="274.7"/><line x1="-15.7" y1="278.5" x2="955.2" y2="274.7"/><line x1="-15.6" y1="278.5" x2="953.1" y2="274.7"/><line x1="-15.4" y1="278.5" x2="951.1" y2="274.7"/><line x1="-15.3" y1="278.4" x2="949.0" y2="274.7"/><line x1="-15.2" y1="278.4" x2="947.0" y2="274.7"/><line x1="-15.1" y1="278.4" x2="944.9" y2="274.7"/><line x1="-14.9" y1="278.3" x2="942.9" y2="274.6"/><line x1="-14.8" y1="278.3" x2="940.9" y2="274.6"/><line x1="-14.7" y1="278.3" x2="938.9" y2="274.6"/><line x1="-14.6" y1="278.2" x2="936.9" y2="274.6"/><line x1="-14.5" y1="278.2" x2="934.9" y2="274.6"/><line x1="-14.3" y1="278.2" x2="932.9" y2="274.6"/><line x1="-14.2" y1="278.1" x2="930.9" y2="274.6"/><line x1="-14.1" y1="278.1" x2="929.0" y2="274.6"/><line x1="-14.0" y1="278.1" x2="927.0" y2="274.6"/><line x1="-13.9" y1="278.1" x2="925.1" y2="274.6"/><line x1="-13.8" y1="278.0" x2="923.1" y2="274.6"/><line x1="-13.7" y1="278.0" x2="921.2" y2="274.6"/><line x1="-13.5" y1="278.0" x2="919.3" y2="274.6"/><line x1="-13.4" y1="277.9" x2="917.3" y2="274.5"/><line x1="-13.3" y1="277.9" x2="915.4" y2="274.5"/><line x1="-13.2" y1="277.9" x2="913.5" y2="274.5"/><line x1="-13.1" y1="277.9" x2="911.6" y2="274.5"/><line x1="-13.0" y1="277.8" x2="909.8" y2="274.5"/><line x1="-12.9" y1="277.8" x2="907.9" y2="274.5"/><line x1="-12.8" y1="277.8" x2="906.0" y2="274.5"/><line x1="-12.7" y1="277.7" x2="904.2" y2="274.5"/><line x1="-12.6" y1="277.7" x2="902.3" y2="274.5"/><line x1="-12.5" y1="277.7" x2="900.5" y2="274.5"/><line x1="-12.4" y1="277.7" x2="898.6" y2="274.5"/><line x1="-12.3" y1="277.6" x2="896.8" y2="274.5"/><line x1="-12.2" y1="277.6" x2="895.0" y2="274.5"/><line x1="-12.1" y1="277.6" x2="893.2" y2="274.4"/><line x1="-12.0" y1="277.6" x2="891.3" y2="274.4"/><line x1="-11.9" y1="277.5" x2="889.5" y2="274.4"/><line x1="-11.8" y1="277.5" x2="887.8" y2="274.4"/><line x1="-11.7" y1="277.5" x2="886.0" y2="274.4"/><line x1="-11.6" y1="277.5" x2="884.2" y2="274.4"/><line x1="-11.5" y1="277.4" x2="882.4" y2="274.4"/><line x1="-11.4" y1="277.4" x2="880.7" y2="274.4"/><line x1="-11.3" y1="277.4" x2="878.9" y2="274.4"/><line x1="-11.2" y1="277.4" x2="877.1" y2="274.4"/><line x1="-11.1" y1="277.3" x2="875.4" y2="274.4"/><line x1="-11.0" y1="277.3" x2="873.7" y2="274.4"/><line x1="-11.0" y1="277.3" x2="871.9" y2="274.4"/><line x1="-10.9" y1="277.3" x2="870.2" y2="274.4"/><line x1="-10.8" y1="277.2" x2="868.5" y2="274.4"/><line x1="-10.7" y1="277.2" x2="866.8" y2="274.3"/><line x1="-10.6" y1="277.2" x2="865.1" y2="274.3"/><line x1="-10.5" y1="277.2" x2="863.4" y2="274.3"/><line x1="-10.4" y1="277.1" x2="861.7" y2="274.3"/><line x1="-10.3" y1="277.1" x2="860.0" y2="274.3"/><line x1="-10.3" y1="277.1" x2="858.4" y2="274.3"/><line x1="-10.2" y1="277.1" x2="856.7" y2="274.3"/><line x1="-10.1" y1="277.1" x2="855.0" y2="274.3"/><line x1="-10.0" y1="277.0" x2="853.4" y2="274.3"/><line x1="-9.9" y1="277.0" x2="851.7" y2="274.3"/><line x1="-9.8" y1="277.0" x2="850.1" y2="274.3"/><line x1="-9.8" y1="277.0" x2="848.4" y2="274.3"/><line x1="-9.7" y1="277.0" x2="846.8" y2="274.3"/><line x1="-9.6" y1="276.9" x2="845.2" y2="274.3"/><line x1="-9.5" y1="276.9" x2="843.6" y2="274.3"/><line x1="-9.4" y1="276.9" x2="842.0" y2="274.2"/><line x1="-9.4" y1="276.9" x2="840.4" y2="274.2"/><line x1="-9.3" y1="276.8" x2="838.8" y2="274.2"/><line x1="-9.2" y1="276.8" x2="837.2" y2="274.2"/><line x1="-9.1" y1="276.8" x2="835.6" y2="274.2"/><line x1="-9.0" y1="276.8" x2="834.0" y2="274.2"/><line x1="-9.0" y1="276.8" x2="832.4" y2="274.2"/><line x1="-8.9" y1="276.7" x2="830.9" y2="274.2"/><line x1="-8.8" y1="276.7" x2="829.3" y2="274.2"/><line x1="-8.7" y1="276.7" x2="827.8" y2="274.2"/><line x1="-8.7" y1="276.7" x2="826.2" y2="274.2"/><line x1="-8.6" y1="276.7" x2="824.7" y2="274.2"/><line x1="-8.5" y1="276.7" x2="823.1" y2="274.2"/><line x1="-8.5" y1="276.6" x2="821.6" y2="274.2"/><line x1="-8.4" y1="276.6" x2="820.1" y2="274.2"/><line x1="-8.3" y1="276.6" x2="818.5" y2="274.2"/><line x1="-8.2" y1="276.6" x2="817.0" y2="274.1"/></g></g><g clip-path="url(#fcr)" opacity="0.62"><use href="#sideg"/></g><g clip-path="url(#fcc)" opacity="0.4"><line x1="10050.3" y1="5057.7" x2="14.8" y2="271.8"/><line x1="5308.3" y1="773.6" x2="21.8" y2="271.8"/><line x1="2937.6" y1="425.1" x2="28.7" y2="271.8"/><line x1="2508.2" y1="362.0" x2="35.6" y2="271.8"/><line x1="2328.4" y1="335.6" x2="42.5" y2="271.8"/><line x1="2229.5" y1="321.0" x2="49.3" y2="271.8"/><line x1="2166.9" y1="311.8" x2="56.1" y2="271.8"/><line x1="2123.8" y1="305.5" x2="62.8" y2="271.8"/><line x1="2092.2" y1="300.9" x2="69.4" y2="271.8"/><line x1="2068.1" y1="297.3" x2="76.1" y2="271.8"/><line x1="2049.2" y1="294.5" x2="82.6" y2="271.8"/><line x1="2033.8" y1="292.3" x2="89.1" y2="271.8"/><line x1="2021.2" y1="290.4" x2="95.6" y2="271.8"/><line x1="2010.6" y1="288.9" x2="102.0" y2="271.8"/><line x1="2001.5" y1="287.5" x2="108.4" y2="271.8"/><line x1="1993.7" y1="286.4" x2="114.7" y2="271.8"/><line x1="1986.9" y1="285.4" x2="121.0" y2="271.8"/><line x1="1981.0" y1="284.5" x2="127.3" y2="271.8"/><line x1="1975.7" y1="283.7" x2="133.5" y2="271.8"/><line x1="1971.0" y1="283.1" x2="139.6" y2="271.8"/><line x1="1966.8" y1="282.4" x2="145.7" y2="271.8"/><line x1="1963.0" y1="281.9" x2="151.8" y2="271.8"/><line x1="1959.5" y1="281.4" x2="157.8" y2="271.8"/><line x1="1956.4" y1="280.9" x2="163.8" y2="271.8"/><line x1="1953.5" y1="280.5" x2="169.8" y2="271.8"/><line x1="1950.9" y1="280.1" x2="175.7" y2="271.8"/><line x1="1948.4" y1="279.7" x2="181.5" y2="271.8"/><line x1="1946.2" y1="279.4" x2="187.4" y2="271.8"/><line x1="1944.1" y1="279.1" x2="193.2" y2="271.8"/><line x1="1942.2" y1="278.8" x2="198.9" y2="271.8"/><line x1="1940.4" y1="278.6" x2="204.6" y2="271.8"/><line x1="1938.7" y1="278.3" x2="210.3" y2="271.7"/><line x1="1937.1" y1="278.1" x2="215.9" y2="271.7"/><line x1="1935.6" y1="277.9" x2="221.5" y2="271.7"/><line x1="1934.2" y1="277.6" x2="227.1" y2="271.7"/><line x1="1932.9" y1="277.5" x2="232.6" y2="271.7"/><line x1="1931.7" y1="277.3" x2="238.1" y2="271.7"/><line x1="1930.5" y1="277.1" x2="243.5" y2="271.7"/><line x1="1929.4" y1="276.9" x2="248.9" y2="271.7"/><line x1="1928.3" y1="276.8" x2="254.3" y2="271.7"/><line x1="1927.3" y1="276.6" x2="259.6" y2="271.7"/><line x1="1926.4" y1="276.5" x2="264.9" y2="271.7"/><line x1="1925.5" y1="276.4" x2="270.2" y2="271.7"/><line x1="1924.6" y1="276.2" x2="275.4" y2="271.7"/><line x1="1923.8" y1="276.1" x2="280.6" y2="271.7"/><line x1="1923.0" y1="276.0" x2="285.8" y2="271.7"/><line x1="1922.3" y1="275.9" x2="290.9" y2="271.7"/><line x1="1921.6" y1="275.8" x2="296.0" y2="271.7"/><line x1="1920.9" y1="275.7" x2="301.1" y2="271.7"/><line x1="1920.2" y1="275.6" x2="306.2" y2="271.7"/><line x1="1919.6" y1="275.5" x2="311.2" y2="271.7"/><line x1="1919.0" y1="275.4" x2="316.1" y2="271.7"/><line x1="1918.4" y1="275.3" x2="321.1" y2="271.7"/><line x1="1917.8" y1="275.2" x2="326.0" y2="271.7"/><line x1="1917.3" y1="275.2" x2="330.9" y2="271.7"/><line x1="1916.8" y1="275.1" x2="335.7" y2="271.7"/><line x1="1916.3" y1="275.0" x2="340.6" y2="271.7"/><line x1="1915.8" y1="274.9" x2="345.3" y2="271.7"/><line x1="1915.3" y1="274.9" x2="350.1" y2="271.7"/><line x1="1914.9" y1="274.8" x2="354.8" y2="271.7"/><line x1="1914.4" y1="274.7" x2="359.5" y2="271.7"/><line x1="1914.0" y1="274.7" x2="364.2" y2="271.7"/><line x1="1913.6" y1="274.6" x2="368.9" y2="271.7"/><line x1="1913.2" y1="274.6" x2="373.5" y2="271.7"/><line x1="1912.8" y1="274.5" x2="378.1" y2="271.7"/><line x1="1912.5" y1="274.4" x2="382.6" y2="271.7"/><line x1="1912.1" y1="274.4" x2="387.2" y2="271.7"/><line x1="1911.8" y1="274.3" x2="391.7" y2="271.7"/><line x1="1911.4" y1="274.3" x2="396.2" y2="271.7"/><line x1="1911.1" y1="274.2" x2="400.6" y2="271.7"/><line x1="1910.8" y1="274.2" x2="405.0" y2="271.7"/><line x1="1910.5" y1="274.2" x2="409.4" y2="271.7"/><line x1="1910.2" y1="274.1" x2="413.8" y2="271.7"/><line x1="1909.9" y1="274.1" x2="418.2" y2="271.7"/><line x1="1909.6" y1="274.0" x2="422.5" y2="271.7"/><line x1="1909.3" y1="274.0" x2="426.8" y2="271.7"/><line x1="1909.0" y1="273.9" x2="431.1" y2="271.6"/><line x1="1908.8" y1="273.9" x2="435.3" y2="271.6"/><line x1="1908.5" y1="273.9" x2="439.5" y2="271.6"/><line x1="1908.3" y1="273.8" x2="443.7" y2="271.6"/><line x1="1908.0" y1="273.8" x2="447.9" y2="271.6"/><line x1="1907.8" y1="273.8" x2="452.1" y2="271.6"/><line x1="1907.6" y1="273.7" x2="456.2" y2="271.6"/><line x1="1907.3" y1="273.7" x2="460.3" y2="271.6"/><line x1="1907.1" y1="273.7" x2="464.4" y2="271.6"/><line x1="1906.9" y1="273.6" x2="468.4" y2="271.6"/><line x1="1906.7" y1="273.6" x2="472.5" y2="271.6"/><line x1="1906.5" y1="273.6" x2="476.5" y2="271.6"/><line x1="1906.3" y1="273.5" x2="480.5" y2="271.6"/><line x1="1906.1" y1="273.5" x2="484.4" y2="271.6"/><line x1="1905.9" y1="273.5" x2="488.4" y2="271.6"/><line x1="1905.7" y1="273.5" x2="492.3" y2="271.6"/><line x1="1905.5" y1="273.4" x2="496.2" y2="271.6"/><line x1="1905.4" y1="273.4" x2="500.1" y2="271.6"/><line x1="1905.2" y1="273.4" x2="503.9" y2="271.6"/><line x1="1905.0" y1="273.4" x2="507.8" y2="271.6"/><line x1="1904.8" y1="273.3" x2="511.6" y2="271.6"/><line x1="1904.7" y1="273.3" x2="515.4" y2="271.6"/><line x1="1904.5" y1="273.3" x2="519.1" y2="271.6"/><line x1="1904.4" y1="273.3" x2="522.9" y2="271.6"/><line x1="1904.2" y1="273.2" x2="526.6" y2="271.6"/><line x1="1904.1" y1="273.2" x2="530.3" y2="271.6"/><line x1="1903.9" y1="273.2" x2="534.0" y2="271.6"/><line x1="1903.8" y1="273.2" x2="537.7" y2="271.6"/><line x1="1903.6" y1="273.1" x2="541.3" y2="271.6"/><line x1="1903.5" y1="273.1" x2="545.0" y2="271.6"/><line x1="1903.3" y1="273.1" x2="548.6" y2="271.6"/><line x1="1903.2" y1="273.1" x2="552.2" y2="271.6"/><line x1="1903.1" y1="273.1" x2="555.8" y2="271.6"/><line x1="1902.9" y1="273.1" x2="559.3" y2="271.6"/><line x1="1902.8" y1="273.0" x2="562.8" y2="271.6"/><line x1="1902.7" y1="273.0" x2="566.4" y2="271.6"/><line x1="1902.6" y1="273.0" x2="569.9" y2="271.6"/><line x1="1902.5" y1="273.0" x2="573.3" y2="271.6"/><line x1="1902.3" y1="273.0" x2="576.8" y2="271.6"/><line x1="1902.2" y1="272.9" x2="580.2" y2="271.6"/><line x1="1902.1" y1="272.9" x2="583.7" y2="271.6"/><line x1="1902.0" y1="272.9" x2="587.1" y2="271.6"/><line x1="1901.9" y1="272.9" x2="590.5" y2="271.6"/><line x1="1901.8" y1="272.9" x2="593.8" y2="271.6"/><line x1="1901.7" y1="272.9" x2="597.2" y2="271.6"/><line x1="1901.6" y1="272.8" x2="600.5" y2="271.6"/><line x1="1901.5" y1="272.8" x2="603.8" y2="271.6"/><line x1="1901.4" y1="272.8" x2="607.1" y2="271.6"/><line x1="1901.3" y1="272.8" x2="610.4" y2="271.6"/><line x1="1901.2" y1="272.8" x2="613.7" y2="271.6"/><line x1="1901.1" y1="272.8" x2="617.0" y2="271.6"/><line x1="1901.0" y1="272.8" x2="620.2" y2="271.6"/><line x1="1900.9" y1="272.7" x2="623.4" y2="271.6"/><line x1="1900.8" y1="272.7" x2="626.6" y2="271.6"/><line x1="1900.7" y1="272.7" x2="629.8" y2="271.6"/><line x1="1900.6" y1="272.7" x2="633.0" y2="271.6"/><line x1="1900.5" y1="272.7" x2="636.1" y2="271.6"/><line x1="1900.4" y1="272.7" x2="639.3" y2="271.6"/><line x1="1900.3" y1="272.7" x2="642.4" y2="271.6"/><line x1="1900.2" y1="272.7" x2="645.5" y2="271.6"/><line x1="1900.2" y1="272.6" x2="648.6" y2="271.6"/><line x1="1900.1" y1="272.6" x2="651.7" y2="271.6"/><line x1="1900.0" y1="272.6" x2="654.7" y2="271.6"/><line x1="1899.9" y1="272.6" x2="657.8" y2="271.5"/><line x1="1899.8" y1="272.6" x2="660.8" y2="271.5"/><line x1="1899.8" y1="272.6" x2="663.8" y2="271.5"/><line x1="1899.7" y1="272.6" x2="666.8" y2="271.5"/><line x1="1899.6" y1="272.6" x2="669.8" y2="271.5"/><line x1="1899.5" y1="272.5" x2="672.8" y2="271.5"/><line x1="1899.5" y1="272.5" x2="675.7" y2="271.5"/><line x1="1899.4" y1="272.5" x2="678.7" y2="271.5"/><line x1="1899.3" y1="272.5" x2="681.6" y2="271.5"/><line x1="1899.3" y1="272.5" x2="684.5" y2="271.5"/><line x1="1899.2" y1="272.5" x2="687.4" y2="271.5"/><line x1="1899.1" y1="272.5" x2="690.3" y2="271.5"/><line x1="1899.1" y1="272.5" x2="693.2" y2="271.5"/><line x1="1899.0" y1="272.5" x2="696.0" y2="271.5"/><line x1="1898.9" y1="272.5" x2="698.9" y2="271.5"/><line x1="1898.9" y1="272.4" x2="701.7" y2="271.5"/><line x1="1898.8" y1="272.4" x2="704.5" y2="271.5"/><line x1="1898.7" y1="272.4" x2="707.3" y2="271.5"/><line x1="1898.7" y1="272.4" x2="710.1" y2="271.5"/><line x1="1898.6" y1="272.4" x2="712.9" y2="271.5"/><line x1="1898.5" y1="272.4" x2="715.7" y2="271.5"/><line x1="1898.5" y1="272.4" x2="718.4" y2="271.5"/><line x1="1898.4" y1="272.4" x2="721.2" y2="271.5"/><line x1="1898.4" y1="272.4" x2="723.9" y2="271.5"/><line x1="1898.3" y1="272.4" x2="726.6" y2="271.5"/><line x1="1898.3" y1="272.4" x2="729.3" y2="271.5"/><line x1="1898.2" y1="272.4" x2="732.0" y2="271.5"/><line x1="1898.1" y1="272.3" x2="734.7" y2="271.5"/><line x1="1898.1" y1="272.3" x2="737.4" y2="271.5"/><line x1="1898.0" y1="272.3" x2="740.0" y2="271.5"/><line x1="1898.0" y1="272.3" x2="742.7" y2="271.5"/><line x1="1897.9" y1="272.3" x2="745.3" y2="271.5"/><line x1="1897.9" y1="272.3" x2="747.9" y2="271.5"/><line x1="1897.8" y1="272.3" x2="750.5" y2="271.5"/><line x1="1897.8" y1="272.3" x2="753.1" y2="271.5"/><line x1="1897.7" y1="272.3" x2="755.7" y2="271.5"/><line x1="1897.7" y1="272.3" x2="758.2" y2="271.5"/><line x1="1897.6" y1="272.3" x2="760.8" y2="271.5"/><line x1="1897.6" y1="272.3" x2="763.3" y2="271.5"/><line x1="1897.5" y1="272.3" x2="765.9" y2="271.5"/><line x1="1897.5" y1="272.2" x2="768.4" y2="271.5"/><line x1="1897.4" y1="272.2" x2="770.9" y2="271.5"/><line x1="1897.4" y1="272.2" x2="773.4" y2="271.5"/><line x1="1897.3" y1="272.2" x2="775.9" y2="271.5"/><line x1="1897.3" y1="272.2" x2="778.4" y2="271.5"/><line x1="1897.2" y1="272.2" x2="780.8" y2="271.5"/><line x1="1897.2" y1="272.2" x2="783.3" y2="271.5"/><line x1="1897.2" y1="272.2" x2="785.8" y2="271.5"/><line x1="1897.1" y1="272.2" x2="788.2" y2="271.5"/><line x1="1897.1" y1="272.2" x2="790.6" y2="271.5"/><line x1="1897.0" y1="272.2" x2="793.0" y2="271.5"/><line x1="1897.0" y1="272.2" x2="795.4" y2="271.5"/><line x1="1896.9" y1="272.2" x2="797.8" y2="271.5"/><line x1="1896.9" y1="272.2" x2="800.2" y2="271.5"/><line x1="1896.9" y1="272.2" x2="802.6" y2="271.5"/><line x1="1896.8" y1="272.1" x2="804.9" y2="271.5"/><line x1="1896.8" y1="272.1" x2="807.3" y2="271.5"/><line x1="1896.7" y1="272.1" x2="809.6" y2="271.5"/><line x1="1896.7" y1="272.1" x2="812.0" y2="271.5"/><line x1="1896.7" y1="272.1" x2="814.3" y2="271.5"/><line x1="1896.6" y1="272.1" x2="816.6" y2="271.5"/><line x1="1896.6" y1="272.1" x2="818.9" y2="271.5"/><line x1="45100.0" y1="6622.6" x2="1896.6" y2="272.1"/><line x1="-26023.1" y1="6622.6" x2="1884.1" y2="272.1"/><line x1="-1273.2" y1="473.8" x2="1871.8" y2="272.1"/><line x1="-568.8" y1="362.7" x2="1859.7" y2="272.1"/><line x1="-363.0" y1="330.3" x2="1847.8" y2="272.1"/><line x1="-264.7" y1="314.8" x2="1835.9" y2="272.1"/><line x1="-207.2" y1="305.7" x2="1824.3" y2="272.1"/><line x1="-169.4" y1="299.8" x2="1812.8" y2="272.1"/><line x1="-142.7" y1="295.5" x2="1801.4" y2="272.1"/><line x1="-122.8" y1="292.4" x2="1790.2" y2="272.1"/><line x1="-107.4" y1="290.0" x2="1779.1" y2="272.0"/><line x1="-95.1" y1="288.1" x2="1768.1" y2="272.0"/><line x1="-85.1" y1="286.5" x2="1757.3" y2="272.0"/><line x1="-76.8" y1="285.2" x2="1746.6" y2="272.0"/><line x1="-69.8" y1="284.1" x2="1736.1" y2="272.0"/><line x1="-63.8" y1="283.1" x2="1725.7" y2="272.0"/><line x1="-58.7" y1="282.3" x2="1715.4" y2="272.0"/><line x1="-54.1" y1="281.6" x2="1705.2" y2="272.0"/><line x1="-50.1" y1="281.0" x2="1695.1" y2="272.0"/><line x1="-46.6" y1="280.4" x2="1685.2" y2="272.0"/><line x1="-43.4" y1="279.9" x2="1675.4" y2="272.0"/><line x1="-40.6" y1="279.5" x2="1665.7" y2="272.0"/><line x1="-38.0" y1="279.0" x2="1656.1" y2="272.0"/><line x1="-35.7" y1="278.7" x2="1646.6" y2="272.0"/><line x1="-33.5" y1="278.3" x2="1637.2" y2="272.0"/><line x1="-31.6" y1="278.0" x2="1628.0" y2="272.0"/><line x1="-29.8" y1="277.7" x2="1618.8" y2="272.0"/><line x1="-28.1" y1="277.5" x2="1609.8" y2="271.9"/><line x1="-26.6" y1="277.2" x2="1600.8" y2="271.9"/><line x1="-25.2" y1="277.0" x2="1591.9" y2="271.9"/><line x1="-23.9" y1="276.8" x2="1583.2" y2="271.9"/><line x1="-22.6" y1="276.6" x2="1574.5" y2="271.9"/><line x1="-21.5" y1="276.4" x2="1566.0" y2="271.9"/><line x1="-20.4" y1="276.3" x2="1557.5" y2="271.9"/><line x1="-19.4" y1="276.1" x2="1549.1" y2="271.9"/><line x1="-18.4" y1="276.0" x2="1540.8" y2="271.9"/><line x1="-17.5" y1="275.8" x2="1532.6" y2="271.9"/><line x1="-16.7" y1="275.7" x2="1524.5" y2="271.9"/><line x1="-15.9" y1="275.5" x2="1516.5" y2="271.9"/><line x1="-15.1" y1="275.4" x2="1508.5" y2="271.9"/><line x1="-14.4" y1="275.3" x2="1500.7" y2="271.9"/><line x1="-13.7" y1="275.2" x2="1492.9" y2="271.9"/><line x1="-13.0" y1="275.1" x2="1485.2" y2="271.9"/><line x1="-12.4" y1="275.0" x2="1477.6" y2="271.9"/><line x1="-11.8" y1="274.9" x2="1470.0" y2="271.9"/><line x1="-11.2" y1="274.8" x2="1462.6" y2="271.9"/><line x1="-10.7" y1="274.7" x2="1455.2" y2="271.9"/><line x1="-10.2" y1="274.7" x2="1447.9" y2="271.8"/><line x1="-9.7" y1="274.6" x2="1440.7" y2="271.8"/><line x1="-9.2" y1="274.5" x2="1433.5" y2="271.8"/><line x1="-8.8" y1="274.4" x2="1426.4" y2="271.8"/><line x1="-8.3" y1="274.4" x2="1419.4" y2="271.8"/><line x1="-7.9" y1="274.3" x2="1412.4" y2="271.8"/><line x1="-7.5" y1="274.2" x2="1405.5" y2="271.8"/><line x1="-7.1" y1="274.2" x2="1398.7" y2="271.8"/><line x1="-6.7" y1="274.1" x2="1392.0" y2="271.8"/><line x1="-6.4" y1="274.1" x2="1385.3" y2="271.8"/><line x1="-6.0" y1="274.0" x2="1378.7" y2="271.8"/><line x1="-5.7" y1="273.9" x2="1372.1" y2="271.8"/><line x1="-5.4" y1="273.9" x2="1365.6" y2="271.8"/><line x1="-5.1" y1="273.8" x2="1359.2" y2="271.8"/><line x1="-4.8" y1="273.8" x2="1352.8" y2="271.8"/><line x1="-4.5" y1="273.8" x2="1346.5" y2="271.8"/><line x1="-4.2" y1="273.7" x2="1340.3" y2="271.8"/><line x1="-3.9" y1="273.7" x2="1334.1" y2="271.8"/><line x1="-3.6" y1="273.6" x2="1327.9" y2="271.8"/><line x1="-3.4" y1="273.6" x2="1321.9" y2="271.8"/><line x1="-3.1" y1="273.5" x2="1315.8" y2="271.8"/><line x1="-2.9" y1="273.5" x2="1309.9" y2="271.8"/><line x1="-2.7" y1="273.5" x2="1303.9" y2="271.8"/><line x1="-2.4" y1="273.4" x2="1298.1" y2="271.8"/><line x1="-2.2" y1="273.4" x2="1292.3" y2="271.8"/><line x1="-2.0" y1="273.4" x2="1286.5" y2="271.8"/><line x1="-1.8" y1="273.3" x2="1280.8" y2="271.8"/><line x1="-1.6" y1="273.3" x2="1275.2" y2="271.7"/><line x1="-1.4" y1="273.3" x2="1269.6" y2="271.7"/><line x1="-1.2" y1="273.2" x2="1264.0" y2="271.7"/><line x1="-1.0" y1="273.2" x2="1258.5" y2="271.7"/><line x1="-0.8" y1="273.2" x2="1253.1" y2="271.7"/><line x1="-0.7" y1="273.2" x2="1247.7" y2="271.7"/><line x1="-0.5" y1="273.1" x2="1242.3" y2="271.7"/><line x1="-0.3" y1="273.1" x2="1237.0" y2="271.7"/><line x1="-0.1" y1="273.1" x2="1231.7" y2="271.7"/><line x1="0.0" y1="273.0" x2="1226.5" y2="271.7"/><line x1="0.2" y1="273.0" x2="1221.3" y2="271.7"/><line x1="0.3" y1="273.0" x2="1216.2" y2="271.7"/><line x1="0.5" y1="273.0" x2="1211.1" y2="271.7"/><line x1="0.6" y1="273.0" x2="1206.0" y2="271.7"/><line x1="0.8" y1="272.9" x2="1201.0" y2="271.7"/><line x1="0.9" y1="272.9" x2="1196.1" y2="271.7"/><line x1="1.0" y1="272.9" x2="1191.1" y2="271.7"/><line x1="1.2" y1="272.9" x2="1186.3" y2="271.7"/><line x1="1.3" y1="272.8" x2="1181.4" y2="271.7"/><line x1="1.4" y1="272.8" x2="1176.6" y2="271.7"/><line x1="1.6" y1="272.8" x2="1171.8" y2="271.7"/><line x1="1.7" y1="272.8" x2="1167.1" y2="271.7"/><line x1="1.8" y1="272.8" x2="1162.4" y2="271.7"/><line x1="1.9" y1="272.7" x2="1157.8" y2="271.7"/><line x1="2.0" y1="272.7" x2="1153.2" y2="271.7"/><line x1="2.1" y1="272.7" x2="1148.6" y2="271.7"/><line x1="2.2" y1="272.7" x2="1144.1" y2="271.7"/><line x1="2.4" y1="272.7" x2="1139.6" y2="271.7"/><line x1="2.5" y1="272.7" x2="1135.1" y2="271.7"/><line x1="2.6" y1="272.6" x2="1130.7" y2="271.7"/><line x1="2.7" y1="272.6" x2="1126.3" y2="271.7"/><line x1="2.8" y1="272.6" x2="1121.9" y2="271.7"/><line x1="2.9" y1="272.6" x2="1117.6" y2="271.7"/><line x1="3.0" y1="272.6" x2="1113.3" y2="271.7"/><line x1="3.1" y1="272.6" x2="1109.0" y2="271.6"/><line x1="3.1" y1="272.6" x2="1104.8" y2="271.6"/><line x1="3.2" y1="272.5" x2="1100.6" y2="271.6"/><line x1="3.3" y1="272.5" x2="1096.5" y2="271.6"/><line x1="3.4" y1="272.5" x2="1092.3" y2="271.6"/><line x1="3.5" y1="272.5" x2="1088.2" y2="271.6"/><line x1="3.6" y1="272.5" x2="1084.2" y2="271.6"/><line x1="3.7" y1="272.5" x2="1080.1" y2="271.6"/><line x1="3.7" y1="272.5" x2="1076.1" y2="271.6"/><line x1="3.8" y1="272.4" x2="1072.1" y2="271.6"/><line x1="3.9" y1="272.4" x2="1068.2" y2="271.6"/><line x1="4.0" y1="272.4" x2="1064.3" y2="271.6"/><line x1="4.1" y1="272.4" x2="1060.4" y2="271.6"/><line x1="4.1" y1="272.4" x2="1056.5" y2="271.6"/><line x1="4.2" y1="272.4" x2="1052.7" y2="271.6"/><line x1="4.3" y1="272.4" x2="1048.9" y2="271.6"/><line x1="4.3" y1="272.4" x2="1045.1" y2="271.6"/><line x1="4.4" y1="272.4" x2="1041.4" y2="271.6"/><line x1="4.5" y1="272.3" x2="1037.6" y2="271.6"/><line x1="4.6" y1="272.3" x2="1033.9" y2="271.6"/><line x1="4.6" y1="272.3" x2="1030.3" y2="271.6"/><line x1="4.7" y1="272.3" x2="1026.6" y2="271.6"/><line x1="4.8" y1="272.3" x2="1023.0" y2="271.6"/><line x1="4.8" y1="272.3" x2="1019.4" y2="271.6"/><line x1="4.9" y1="272.3" x2="1015.9" y2="271.6"/><line x1="4.9" y1="272.3" x2="1012.3" y2="271.6"/><line x1="5.0" y1="272.3" x2="1008.8" y2="271.6"/><line x1="5.1" y1="272.3" x2="1005.3" y2="271.6"/><line x1="5.1" y1="272.2" x2="1001.8" y2="271.6"/><line x1="5.2" y1="272.2" x2="998.4" y2="271.6"/><line x1="5.2" y1="272.2" x2="995.0" y2="271.6"/><line x1="5.3" y1="272.2" x2="991.6" y2="271.6"/><line x1="5.3" y1="272.2" x2="988.2" y2="271.6"/><line x1="5.4" y1="272.2" x2="984.9" y2="271.6"/><line x1="5.5" y1="272.2" x2="981.5" y2="271.6"/><line x1="5.5" y1="272.2" x2="978.2" y2="271.6"/><line x1="5.6" y1="272.2" x2="975.0" y2="271.6"/><line x1="5.6" y1="272.2" x2="971.7" y2="271.6"/><line x1="5.7" y1="272.2" x2="968.5" y2="271.6"/><line x1="5.7" y1="272.1" x2="965.3" y2="271.6"/><line x1="5.8" y1="272.1" x2="962.1" y2="271.6"/><line x1="5.8" y1="272.1" x2="958.9" y2="271.6"/><line x1="5.9" y1="272.1" x2="955.7" y2="271.6"/><line x1="5.9" y1="272.1" x2="952.6" y2="271.6"/><line x1="6.0" y1="272.1" x2="949.5" y2="271.6"/><line x1="6.0" y1="272.1" x2="946.4" y2="271.6"/><line x1="6.0" y1="272.1" x2="943.4" y2="271.6"/><line x1="6.1" y1="272.1" x2="940.3" y2="271.5"/><line x1="6.1" y1="272.1" x2="937.3" y2="271.5"/><line x1="6.2" y1="272.1" x2="934.3" y2="271.5"/><line x1="6.2" y1="272.1" x2="931.3" y2="271.5"/><line x1="6.3" y1="272.1" x2="928.3" y2="271.5"/><line x1="6.3" y1="272.1" x2="925.4" y2="271.5"/><line x1="6.4" y1="272.0" x2="922.4" y2="271.5"/><line x1="6.4" y1="272.0" x2="919.5" y2="271.5"/><line x1="6.4" y1="272.0" x2="916.6" y2="271.5"/><line x1="6.5" y1="272.0" x2="913.8" y2="271.5"/><line x1="6.5" y1="272.0" x2="910.9" y2="271.5"/><line x1="6.6" y1="272.0" x2="908.1" y2="271.5"/><line x1="6.6" y1="272.0" x2="905.2" y2="271.5"/><line x1="6.6" y1="272.0" x2="902.4" y2="271.5"/><line x1="6.7" y1="272.0" x2="899.6" y2="271.5"/><line x1="6.7" y1="272.0" x2="896.9" y2="271.5"/><line x1="6.7" y1="272.0" x2="894.1" y2="271.5"/><line x1="6.8" y1="272.0" x2="891.4" y2="271.5"/><line x1="6.8" y1="272.0" x2="888.7" y2="271.5"/><line x1="6.9" y1="272.0" x2="886.0" y2="271.5"/><line x1="6.9" y1="272.0" x2="883.3" y2="271.5"/><line x1="6.9" y1="272.0" x2="880.6" y2="271.5"/><line x1="7.0" y1="272.0" x2="878.0" y2="271.5"/><line x1="7.0" y1="271.9" x2="875.3" y2="271.5"/><line x1="7.0" y1="271.9" x2="872.7" y2="271.5"/><line x1="7.1" y1="271.9" x2="870.1" y2="271.5"/><line x1="7.1" y1="271.9" x2="867.5" y2="271.5"/><line x1="7.1" y1="271.9" x2="865.0" y2="271.5"/><line x1="7.2" y1="271.9" x2="862.4" y2="271.5"/><line x1="7.2" y1="271.9" x2="859.9" y2="271.5"/><line x1="7.2" y1="271.9" x2="857.3" y2="271.5"/><line x1="7.3" y1="271.9" x2="854.8" y2="271.5"/><line x1="7.3" y1="271.9" x2="852.3" y2="271.5"/><line x1="7.3" y1="271.9" x2="849.9" y2="271.5"/><line x1="7.3" y1="271.9" x2="847.4" y2="271.5"/><line x1="7.4" y1="271.9" x2="844.9" y2="271.5"/><line x1="7.4" y1="271.9" x2="842.5" y2="271.5"/><line x1="7.4" y1="271.9" x2="840.1" y2="271.5"/><line x1="7.5" y1="271.9" x2="837.7" y2="271.5"/><line x1="7.5" y1="271.9" x2="835.3" y2="271.5"/><line x1="7.5" y1="271.9" x2="832.9" y2="271.5"/><line x1="7.5" y1="271.9" x2="830.5" y2="271.5"/><line x1="7.6" y1="271.9" x2="828.2" y2="271.5"/><line x1="7.6" y1="271.9" x2="825.8" y2="271.5"/><line x1="7.6" y1="271.8" x2="823.5" y2="271.5"/><line x1="7.7" y1="271.8" x2="821.2" y2="271.5"/><line x1="7.7" y1="271.8" x2="818.9" y2="271.5"/></g></g></g><line x1="619.0" y1="560.0" x2="115" y2="319.6" stroke="#5874b4" stroke-width="1" opacity="0.8"/><line x1="619.0" y1="560.0" x2="1293" y2="406.6" stroke="#c07878" stroke-width="1" stroke-dasharray="3 1" opacity="0.75"/><line x1="618.5" y1="143" x2="618.5" y2="560" stroke="#3fae7a" stroke-width="1"/></svg>
<div class="a" style="left:44px;top:286px;width:289px;height:528px;background:rgba(0,0,0,0.05);"></div>
<div class="a" style="left:1005px;top:286px;width:288px;height:528px;background:rgba(0,0,0,0.05);"></div>
<div class="t" style="left:48px;top:147.7px;font-size:11px;letter-spacing:-0.4px;color:#b8b8b8;font-weight:bold">Perspective</div>
<svg class="a" style="left:1235px;top:146px;" width="52" height="36" viewBox="0 0 52 36"><path d="M24 30.5 V14" stroke="#45c06a" stroke-width="1.6"/><path d="M24 30.5 L13 26.5" stroke="#6a8ac8" stroke-width="1.6"/><path d="M24 30.5 L39 28" stroke="#d04a4a" stroke-width="1.6"/><text x="24" y="11" font-family="Liberation Sans" font-size="9" fill="#45c06a" text-anchor="middle">Y</text><text x="7" y="30" font-family="Liberation Sans" font-size="9" fill="#5878c8" text-anchor="middle">Z</text><text x="45" y="33" font-family="Liberation Sans" font-size="9" fill="#d04a4a" text-anchor="middle">X</text></svg>
<div class="a" style="left:1150px;top:796px;width:140px;height:15px;background:rgba(160,160,160,0.55);"></div>
<div class="t" style="left:1153px;top:798.3px;font-size:10.5px;letter-spacing:0.3px;color:#d0d0d0;">Grid Spacing : 10 cm</div>
<svg class="a" style="left:420px;top:376px;" width="432" height="270" viewBox="0 0 432 270"><g transform="scale(0.25)"><defs>
<radialGradient id="rb" cx="0.45" cy="0.25" r="0.8">
<stop offset="0" stop-color="#312d29"/><stop offset="0.6" stop-color="#272420"/><stop offset="1" stop-color="#1d1b19"/></radialGradient>
<linearGradient id="rt" x1="0" y1="0" x2="1" y2="0.4">
<stop offset="0" stop-color="#b06e5c"/><stop offset="1" stop-color="#96604f"/></linearGradient>
<filter id="fur" x="0" y="0" width="1" height="1"><feTurbulence type="fractalNoise" baseFrequency="0.35" numOctaves="2" seed="3"/><feColorMatrix values="0 0 0 0 0.2  0 0 0 0 0.19  0 0 0 0 0.18  0 0 0 -2.2 1.3"/><feComposite in2="SourceGraphic" operator="in"/></filter>
<filter id="sb" x="-0.5" y="-0.5" width="2" height="2"><feGaussianBlur stdDeviation="8"/></filter>
<filter id="sb2" x="-0.5" y="-0.5" width="2" height="2"><feGaussianBlur stdDeviation="3"/></filter>
<radialGradient id="nose" cx="0.6" cy="0.45" r="0.6"><stop offset="0" stop-color="#9a5048"/><stop offset="0.6" stop-color="#6a3a34"/><stop offset="1" stop-color="#3a2a26" stop-opacity="0"/></radialGradient>
<radialGradient id="face" cx="0.5" cy="0.5" r="0.5"><stop offset="0" stop-color="#4a433e" stop-opacity="0.6"/><stop offset="1" stop-color="#4a433e" stop-opacity="0"/></radialGradient>
<clipPath id="bodyclip"><path d="M445 625 C405 585, 385 500, 392 410 C396 300, 428 186, 498 122 C578 58, 700 44, 830 52 C960 65, 1060 110, 1150 190 C1200 240, 1240 290, 1270 318 C1330 310, 1400 315, 1470 322 C1520 300, 1570 280, 1625 288 C1650 295, 1640 335, 1610 370 C1585 400, 1565 420, 1560 440 C1575 480, 1585 540, 1580 600 C1585 640, 1605 680, 1612 730 C1615 775, 1590 810, 1550 825 C1500 840, 1420 830, 1340 790 C1300 770, 1260 740, 1220 700 C1180 690, 1080 695, 1000 690 C960 700, 950 720, 935 760 C915 820, 920 860, 960 890 C940 905, 910 900, 880 885 C830 850, 795 790, 795 720 C795 690, 805 665, 820 650 C760 630, 700 615, 640 622 C560 630, 490 640, 445 625 Z"/></clipPath>
</defs>
<g>
<!-- tail -->
<path d="M418 318 C330 330, 230 310, 150 262 C110 238, 80 215, 62 203 C50 196, 44 206, 50 216 C70 250, 110 290, 170 322 C250 365, 330 390, 415 392 Z" fill="url(#rt)"/>
<path d="M415 360 C330 370, 250 350, 170 312 C230 350, 320 385, 415 392 Z" fill="#8e5a4b" opacity="0.7"/>
<!-- back foot -->
<path d="M445 600 C450 640, 445 690, 440 740 C436 760, 440 775, 448 772 C455 760, 460 745, 470 735 C480 760, 490 780, 500 778 C510 770, 500 750, 505 740 C520 760, 535 772, 550 770 C560 760, 540 740, 545 730 C560 740, 590 755, 598 748 C600 735, 575 720, 565 705 C545 685, 510 665, 495 630 Z" fill="#c99484"/>
<!-- back right leg strip -->
<path d="M720 600 C760 620, 790 640, 815 655 L830 640 C800 620, 770 605, 740 595 Z" fill="#c0857a"/>
<!-- right front foot -->
<path d="M1300 790 C1330 815, 1370 840, 1420 860 C1435 868, 1450 866, 1440 856 C1450 858, 1462 850, 1450 842 C1420 830, 1390 815, 1360 795 Z" fill="#c99484"/>
<path d="M1205 680 C1230 740, 1265 790, 1305 815 C1320 825, 1345 815, 1360 800 C1320 770, 1295 730, 1280 690 Z" fill="#2c2826"/>
<!-- front left foot -->
<path d="M880 880 C900 910, 930 960, 960 985 C975 995, 985 990, 975 975 C990 990, 1005 998, 1012 990 C1005 975, 995 965, 1000 960 C1020 975, 1045 985, 1058 975 C1045 960, 1020 945, 1005 930 C1030 940, 1050 945, 1055 938 C1040 925, 1000 905, 960 885 Z" fill="#c99484"/>
<!-- body + head -->
<path d="M445 625 C405 585, 385 500, 392 410 C396 300, 428 186, 498 122 C578 58, 700 44, 830 52 C960 65, 1060 110, 1150 190 C1200 240, 1240 290, 1270 318 C1330 310, 1400 315, 1470 322 C1520 300, 1570 280, 1625 288 C1650 295, 1640 335, 1610 370 C1585 400, 1565 420, 1560 440 C1575 480, 1585 540, 1580 600 C1585 640, 1605 680, 1612 730 C1615 775, 1590 810, 1550 825 C1500 840, 1420 830, 1340 790 C1300 770, 1260 740, 1220 700 C1180 690, 1080 695, 1000 690 C960 700, 950 720, 935 760 C915 820, 920 860, 960 890 C940 905, 910 900, 880 885 C830 850, 795 790, 795 720 C795 690, 805 665, 820 650 C760 630, 700 615, 640 622 C560 630, 490 640, 445 625 Z" fill="url(#rb)"/>
<path d="M445 625 C405 585, 385 500, 392 410 C396 300, 428 186, 498 122 C578 58, 700 44, 830 52 C960 65, 1060 110, 1150 190 C1200 240, 1240 290, 1270 318 C1330 310, 1400 315, 1470 322 C1520 300, 1570 280, 1625 288 C1650 295, 1640 335, 1610 370 C1585 400, 1565 420, 1560 440 C1575 480, 1585 540, 1580 600 C1585 640, 1605 680, 1612 730 C1615 775, 1590 810, 1550 825 C1500 840, 1420 830, 1340 790 C1300 770, 1260 740, 1220 700 C1180 690, 1080 695, 1000 690 C960 700, 950 720, 935 760 C915 820, 920 860, 960 890 C940 905, 910 900, 880 885 C830 850, 795 790, 795 720 C795 690, 805 665, 820 650 C760 630, 700 615, 640 622 C560 630, 490 640, 445 625 Z" fill="#000" filter="url(#fur)" opacity="0.25"/>
<!-- far ear shade -->
<path d="M1480 322 C1530 295, 1590 280, 1625 290 C1640 300, 1630 340, 1600 375 C1570 360, 1520 340, 1480 322 Z" fill="#3a3431"/>
<!-- near ear -->
<ellipse cx="1400" cy="520" rx="200" ry="180" fill="url(#face)"/><path d="M1165 420 C1150 380, 1180 350, 1240 348 C1300 346, 1345 370, 1345 420 C1345 455, 1330 480, 1310 490 C1280 470, 1240 455, 1205 470 C1185 460, 1170 440, 1165 420 Z" fill="#7a5850"/>
<path d="M1190 418 C1185 390, 1210 372, 1250 372 C1290 372, 1320 395, 1318 430 C1316 450, 1305 462, 1295 465 C1270 452, 1235 445, 1210 455 C1198 445, 1192 432, 1190 418 Z" fill="#9e6e64" filter="url(#sb2)"/>
<g clip-path="url(#bodyclip)"><!-- eye -->
<ellipse cx="1375" cy="575" rx="62" ry="56" fill="#5a3c34" opacity="0.75" filter="url(#sb)"/>
<ellipse cx="1378" cy="572" rx="42" ry="44" fill="#1a1918"/>
<ellipse cx="1365" cy="555" rx="20" ry="10" fill="#3a3c40" opacity="0.8" filter="url(#sb2)"/>
<ellipse cx="1575" cy="530" rx="14" ry="30" fill="#1a1918"/>
<!-- nose -->
<ellipse cx="1570" cy="745" rx="42" ry="55" fill="url(#nose)" filter="url(#sb)"/>
</g>
</g></g></svg>
<div class="a" style="left:42px;top:815px;width:1252px;height:67px;background:#262626;"></div>
<div class="a" style="left:42px;top:815px;width:1252px;height:1px;background:#1c1c1c;"></div>
<svg class="a" style="left:43px;top:818px;" width="6" height="62" viewBox="0 0 6 62"><rect x="1" y="1" width="1" height="1" fill="#363636"/><rect x="1" y="4" width="1" height="1" fill="#363636"/><rect x="1" y="7" width="1" height="1" fill="#363636"/><rect x="1" y="10" width="1" height="1" fill="#363636"/><rect x="1" y="13" width="1" height="1" fill="#363636"/><rect x="1" y="16" width="1" height="1" fill="#363636"/><rect x="1" y="19" width="1" height="1" fill="#363636"/><rect x="1" y="22" width="1" height="1" fill="#363636"/><rect x="1" y="25" width="1" height="1" fill="#363636"/><rect x="1" y="28" width="1" height="1" fill="#363636"/><rect x="1" y="31" width="1" height="1" fill="#363636"/><rect x="1" y="34" width="1" height="1" fill="#363636"/><rect x="1" y="37" width="1" height="1" fill="#363636"/><rect x="1" y="40" width="1" height="1" fill="#363636"/><rect x="1" y="43" width="1" height="1" fill="#363636"/><rect x="1" y="46" width="1" height="1" fill="#363636"/><rect x="1" y="49" width="1" height="1" fill="#363636"/><rect x="1" y="52" width="1" height="1" fill="#363636"/><rect x="1" y="55" width="1" height="1" fill="#363636"/><rect x="1" y="58" width="1" height="1" fill="#363636"/><rect x="1" y="61" width="1" height="1" fill="#363636"/><rect x="4" y="1" width="1" height="1" fill="#363636"/><rect x="4" y="4" width="1" height="1" fill="#363636"/><rect x="4" y="7" width="1" height="1" fill="#363636"/><rect x="4" y="10" width="1" height="1" fill="#363636"/><rect x="4" y="13" width="1" height="1" fill="#363636"/><rect x="4" y="16" width="1" height="1" fill="#363636"/><rect x="4" y="19" width="1" height="1" fill="#363636"/><rect x="4" y="22" width="1" height="1" fill="#363636"/><rect x="4" y="25" width="1" height="1" fill="#363636"/><rect x="4" y="28" width="1" height="1" fill="#363636"/><rect x="4" y="31" width="1" height="1" fill="#363636"/><rect x="4" y="34" width="1" height="1" fill="#363636"/><rect x="4" y="37" width="1" height="1" fill="#363636"/><rect x="4" y="40" width="1" height="1" fill="#363636"/><rect x="4" y="43" width="1" height="1" fill="#363636"/><rect x="4" y="46" width="1" height="1" fill="#363636"/><rect x="4" y="49" width="1" height="1" fill="#363636"/><rect x="4" y="52" width="1" height="1" fill="#363636"/><rect x="4" y="55" width="1" height="1" fill="#363636"/><rect x="4" y="58" width="1" height="1" fill="#363636"/><rect x="4" y="61" width="1" height="1" fill="#363636"/></svg>
<div class="a" style="left:56px;top:837px;width:1236px;height:1px;background:#4e4e4e;"></div>
<div class="a" style="left:120px;top:839px;width:2px;height:4px;background:#c8c8c8;"></div>
<div class="t" style="left:-29.039999999999992px;width:300px;text-align:center;top:822.2px;font-size:11.5px;letter-spacing:-0.3px;color:#c8c8c8;">1</div>
<div class="a" style="left:172px;top:839px;width:2px;height:4px;background:#c8c8c8;"></div>
<div class="t" style="left:23.420000000000016px;width:300px;text-align:center;top:822.2px;font-size:11.5px;letter-spacing:-0.3px;color:#c8c8c8;">2</div>
<div class="a" style="left:225px;top:839px;width:2px;height:4px;background:#c8c8c8;"></div>
<div class="t" style="left:75.88px;width:300px;text-align:center;top:822.2px;font-size:11.5px;letter-spacing:-0.3px;color:#c8c8c8;">3</div>
<div class="a" style="left:277px;top:839px;width:2px;height:4px;background:#c8c8c8;"></div>
<div class="t" style="left:128.34000000000003px;width:300px;text-align:center;top:822.2px;font-size:11.5px;letter-spacing:-0.3px;color:#c8c8c8;">4</div>
<div class="a" style="left:330px;top:839px;width:2px;height:4px;background:#c8c8c8;"></div>
<div class="t" style="left:180.8px;width:300px;text-align:center;top:822.2px;font-size:11.5px;letter-spacing:-0.3px;color:#c8c8c8;">5</div>
<div class="a" style="left:382px;top:839px;width:2px;height:4px;background:#c8c8c8;"></div>
<div class="t" style="left:233.26px;width:300px;text-align:center;top:822.2px;font-size:11.5px;letter-spacing:-0.3px;color:#c8c8c8;">6</div>
<div class="a" style="left:435px;top:839px;width:2px;height:4px;background:#c8c8c8;"></div>
<div class="t" style="left:285.72px;width:300px;text-align:center;top:822.2px;font-size:11.5px;letter-spacing:-0.3px;color:#c8c8c8;">7</div>
<div class="a" style="left:487px;top:839px;width:2px;height:4px;background:#c8c8c8;"></div>
<div class="t" style="left:338.18px;width:300px;text-align:center;top:822.2px;font-size:11.5px;letter-spacing:-0.3px;color:#c8c8c8;">8</div>
<div class="a" style="left:540px;top:839px;width:2px;height:4px;background:#c8c8c8;"></div>
<div class="t" style="left:390.64px;width:300px;text-align:center;top:822.2px;font-size:11.5px;letter-spacing:-0.3px;color:#c8c8c8;">9</div>
<div class="a" style="left:592px;top:839px;width:2px;height:4px;background:#c8c8c8;"></div>
<div class="t" style="left:443.1px;width:300px;text-align:center;top:822.2px;font-size:11.5px;letter-spacing:-0.3px;color:#c8c8c8;">10</div>
<div class="a" style="left:645px;top:839px;width:2px;height:4px;background:#c8c8c8;"></div>
<div class="t" style="left:495.56000000000006px;width:300px;text-align:center;top:822.2px;font-size:11.5px;letter-spacing:-0.3px;color:#c8c8c8;">11</div>
<div class="a" style="left:697px;top:839px;width:2px;height:4px;background:#c8c8c8;"></div>
<div class="t" style="left:548.02px;width:300px;text-align:center;top:822.2px;font-size:11.5px;letter-spacing:-0.3px;color:#c8c8c8;">12</div>
<div class="a" style="left:749px;top:839px;width:2px;height:4px;background:#c8c8c8;"></div>
<div class="t" style="left:600.48px;width:300px;text-align:center;top:822.2px;font-size:11.5px;letter-spacing:-0.3px;color:#c8c8c8;">13</div>
<div class="a" style="left:802px;top:839px;width:2px;height:4px;background:#c8c8c8;"></div>
<div class="t" style="left:652.94px;width:300px;text-align:center;top:822.2px;font-size:11.5px;letter-spacing:-0.3px;color:#c8c8c8;">14</div>
<div class="a" style="left:854px;top:839px;width:2px;height:4px;background:#c8c8c8;"></div>
<div class="t" style="left:705.4px;width:300px;text-align:center;top:822.2px;font-size:11.5px;letter-spacing:-0.3px;color:#c8c8c8;">15</div>
<div class="a" style="left:907px;top:839px;width:2px;height:4px;background:#c8c8c8;"></div>
<div class="t" style="left:757.86px;width:300px;text-align:center;top:822.2px;font-size:11.5px;letter-spacing:-0.3px;color:#c8c8c8;">16</div>
<div class="a" style="left:959px;top:839px;width:2px;height:4px;background:#c8c8c8;"></div>
<div class="t" style="left:810.32px;width:300px;text-align:center;top:822.2px;font-size:11.5px;letter-spacing:-0.3px;color:#c8c8c8;">17</div>
<div class="a" style="left:1012px;top:839px;width:2px;height:4px;background:#c8c8c8;"></div>
<div class="t" style="left:862.78px;width:300px;text-align:center;top:822.2px;font-size:11.5px;letter-spacing:-0.3px;color:#c8c8c8;">18</div>
<div class="a" style="left:1064px;top:839px;width:2px;height:4px;background:#c8c8c8;"></div>
<div class="t" style="left:915.24px;width:300px;text-align:center;top:822.2px;font-size:11.5px;letter-spacing:-0.3px;color:#c8c8c8;">19</div>
<div class="a" style="left:1117px;top:839px;width:2px;height:4px;background:#c8c8c8;"></div>
<div class="t" style="left:967.7px;width:300px;text-align:center;top:822.2px;font-size:11.5px;letter-spacing:-0.3px;color:#c8c8c8;">20</div>
<div class="a" style="left:1169px;top:839px;width:2px;height:4px;background:#c8c8c8;"></div>
<div class="t" style="left:1020.1600000000001px;width:300px;text-align:center;top:822.2px;font-size:11.5px;letter-spacing:-0.3px;color:#c8c8c8;">21</div>
<div class="a" style="left:1222px;top:839px;width:2px;height:4px;background:#c8c8c8;"></div>
<div class="t" style="left:1072.6200000000001px;width:300px;text-align:center;top:822.2px;font-size:11.5px;letter-spacing:-0.3px;color:#c8c8c8;">22</div>
<div class="a" style="left:1274px;top:839px;width:2px;height:4px;background:#c8c8c8;"></div>
<div class="t" style="left:1125.08px;width:300px;text-align:center;top:822.2px;font-size:11.5px;letter-spacing:-0.3px;color:#c8c8c8;">23</div>
<div class="a" style="left:63px;top:821px;width:10px;height:16px;background:#7074c8;"></div>
<div class="a" style="left:67px;top:837px;width:2px;height:6px;background:#dddddd;"></div>
<div class="t" style="left:74.5px;top:822.2px;font-size:11.5px;letter-spacing:-0.3px;color:#8a8ed8;">0</div>
<div class="a" style="left:54px;top:855px;width:78px;height:18px;background:#1a1a1a;border-radius:4px"></div>
<svg class="a" style="left:56px;top:859px;" width="6" height="10" viewBox="0 0 6 10"><path d="M5 1 L1 5 L5 9" stroke="#888" stroke-width="1.2" fill="none"/></svg>
<svg class="a" style="left:124px;top:859px;" width="6" height="10" viewBox="0 0 6 10"><path d="M1 1 L5 5 L1 9" stroke="#888" stroke-width="1.2" fill="none"/></svg>
<div class="t" style="left:-58px;width:300px;text-align:center;top:857.7px;font-size:11.5px;letter-spacing:0.6px;color:#e0e0e0;">0 F</div>
<div class="a" style="left:139px;top:855px;width:522px;height:18px;background:#383838;border-radius:3px"></div>
<div class="a" style="left:144px;top:858px;width:1px;height:12px;background:#777;"></div>
<div class="a" style="left:147px;top:858px;width:1px;height:12px;background:#777;"></div>
<div class="t" style="left:154px;top:857.7px;font-size:11.5px;letter-spacing:0.6px;color:#d8d8d8;">0 F</div>
<div class="t" style="left:622px;top:857.7px;font-size:11.5px;letter-spacing:0px;color:#c8c8c8;">23 F</div>
<div class="a" style="left:652px;top:858px;width:1px;height:12px;background:#777;"></div>
<div class="a" style="left:655px;top:858px;width:1px;height:12px;background:#777;"></div>
<div class="a" style="left:669px;top:856px;width:77px;height:16px;background:#1a1a1a;border-radius:4px"></div>
<svg class="a" style="left:671px;top:859px;" width="6" height="10" viewBox="0 0 6 10"><path d="M5 1 L1 5 L5 9" stroke="#888" stroke-width="1.2" fill="none"/></svg>
<svg class="a" style="left:738px;top:859px;" width="6" height="10" viewBox="0 0 6 10"><path d="M1 1 L5 5 L1 9" stroke="#888" stroke-width="1.2" fill="none"/></svg>
<div class="t" style="left:557px;width:300px;text-align:center;top:857.7px;font-size:11.5px;letter-spacing:0px;color:#d8d8d8;">23 F</div>
<div class="a" style="left:759px;top:852px;width:26px;height:25px;background:#373737;"></div>
<svg class="a" style="left:759px;top:852px;" width="26" height="25" viewBox="0 0 26 25"><rect x="6" y="6" width="2.2" height="13" fill="#cfcfcf"/><path d="M21 6 V19 L9 12.5 Z" fill="#cfcfcf"/></svg>
<div class="a" style="left:797px;top:852px;width:27px;height:25px;background:#373737;"></div>
<svg class="a" style="left:797px;top:852px;" width="27" height="25" viewBox="0 0 27 25"><path d="M5 12.5 L8.5 9 L12 12.5 L8.5 16 Z" fill="none" stroke="#cfcfcf" stroke-width="1.4"/><path d="M23 6 V19 L13 12.5 Z" fill="#cfcfcf"/></svg>
<div class="a" style="left:825px;top:852px;width:27px;height:25px;background:#373737;"></div>
<svg class="a" style="left:825px;top:852px;" width="27" height="25" viewBox="0 0 27 25"><path d="M17 6 V19 L7 12.5 Z" fill="#cfcfcf"/><rect x="18.5" y="6" width="2.2" height="13" fill="#cfcfcf"/></svg>
<div class="a" style="left:853px;top:852px;width:27px;height:25px;background:#373737;"></div>
<svg class="a" style="left:853px;top:852px;" width="27" height="25" viewBox="0 0 27 25"><path d="M7.5 4 V21 L19.5 12.5 Z" fill="#cfcfcf"/></svg>
<div class="a" style="left:881px;top:852px;width:27px;height:25px;background:#373737;"></div>
<svg class="a" style="left:881px;top:852px;" width="27" height="25" viewBox="0 0 27 25"><rect x="6" y="6" width="2.2" height="13" fill="#cfcfcf"/><path d="M10 6 V19 L20 12.5 Z" fill="#cfcfcf"/></svg>
<div class="a" style="left:909px;top:852px;width:28px;height:25px;background:#373737;"></div>
<svg class="a" style="left:909px;top:852px;" width="28" height="25" viewBox="0 0 28 25"><path d="M4 6 V19 L14 12.5 Z" fill="#cfcfcf"/><path d="M15 12.5 L18.5 9 L22 12.5 L18.5 16 Z" fill="none" stroke="#cfcfcf" stroke-width="1.4"/></svg>
<div class="a" style="left:949px;top:852px;width:26px;height:25px;background:#373737;"></div>
<svg class="a" style="left:949px;top:852px;" width="26" height="25" viewBox="0 0 26 25"><path d="M5 6 V19 L17 12.5 Z" fill="#cfcfcf"/><rect x="18" y="6" width="2.2" height="13" fill="#cfcfcf"/></svg>
<div class="a" style="left:988px;top:852px;width:26px;height:25px;background:#373737;"></div>
<svg class="a" style="left:988px;top:852px;" width="26" height="25" viewBox="0 0 26 25"><circle cx="12.5" cy="12.5" r="9" fill="#5a3a3a"/><path d="M12.5 6 L19 12.5 L12.5 19 L6 12.5 Z" fill="none" stroke="#7a4a4a" stroke-width="1.4"/></svg>
<svg class="a" style="left:1009px;top:872px;" width="4" height="4" viewBox="0 0 4 4"><path d="M4 0 V4 H0 Z" fill="#aaa"/></svg>
<div class="a" style="left:1014px;top:852px;width:28px;height:25px;background:#373737;"></div>
<svg class="a" style="left:1014px;top:852px;" width="28" height="25" viewBox="0 0 28 25"><circle cx="14" cy="12.5" r="9.5" fill="#e24a4a"/><path d="M9.5 17.5 L14 6.5 L18.5 17.5 M11 14 H17" stroke="#2a2a2a" stroke-width="1.6" fill="none"/></svg>
<div class="a" style="left:1054px;top:852px;width:26px;height:25px;background:#373737;"></div>
<svg class="a" style="left:1054px;top:852px;" width="26" height="25" viewBox="0 0 26 25"><circle cx="13" cy="12.5" r="9.2" fill="#cfcfcf"/><rect x="11.6" y="6.3" width="2.8" height="12.4" fill="#333" transform="rotate(0 13 12.5)"/><rect x="11.6" y="6.3" width="2.8" height="12.4" fill="#333" transform="rotate(45 13 12.5)"/><rect x="11.6" y="6.3" width="2.8" height="12.4" fill="#333" transform="rotate(90 13 12.5)"/><rect x="11.6" y="6.3" width="2.8" height="12.4" fill="#333" transform="rotate(135 13 12.5)"/><circle cx="13" cy="12.5" r="4.6" fill="#333"/><circle cx="13" cy="12.5" r="1.9" fill="#cfcfcf"/></svg>
<div class="a" style="left:1085px;top:852px;width:27px;height:25px;background:#373737;"></div>
<svg class="a" style="left:1085px;top:852px;" width="27" height="25" viewBox="0 0 27 25"><path d="M13.5 8.5 L17.5 12.5 L13.5 16.5 L9.5 12.5 Z" fill="none" stroke="#cfcfcf" stroke-width="1.5"/><path d="M13.5 3 L11.5 5.5 H15.5 Z M13.5 22 L11.5 19.5 H15.5 Z M4 12.5 L6.5 10.5 V14.5 Z M23 12.5 L20.5 10.5 V14.5 Z" fill="#cfcfcf"/></svg>
<div class="a" style="left:1113px;top:852px;width:27px;height:25px;background:#373737;"></div>
<svg class="a" style="left:1113px;top:852px;" width="27" height="25" viewBox="0 0 27 25"><path d="M10 7 V4.5 H22 V20.5 H17" stroke="#cfcfcf" stroke-width="1.6" fill="none"/><path d="M10 11 L14 15 L10 19 L6 15 Z" fill="none" stroke="#cfcfcf" stroke-width="1.5"/><path d="M15 10 H17 V12" stroke="#cfcfcf" stroke-width="1.4" fill="none"/></svg>
<div class="a" style="left:1141px;top:852px;width:27px;height:25px;background:#373737;"></div>
<svg class="a" style="left:1141px;top:852px;" width="27" height="25" viewBox="0 0 27 25"><path d="M13.5 8.5 L17.5 12.5 L13.5 16.5 L9.5 12.5 Z" fill="none" stroke="#cfcfcf" stroke-width="1.5"/><path d="M9 4.5 A9 9 0 0 0 8 20" stroke="#cfcfcf" stroke-width="1.6" fill="none"/><path d="M18 20.5 A9 9 0 0 0 19 5" stroke="#cfcfcf" stroke-width="1.6" fill="none"/></svg>
<div class="a" style="left:1169px;top:852px;width:28px;height:25px;background:#373737;"></div>
<svg class="a" style="left:1169px;top:852px;" width="28" height="25" viewBox="0 0 28 25"><rect x="5" y="6" width="18" height="6" rx="3" fill="#cfcfcf"/><rect x="5" y="14" width="18" height="6" rx="3" fill="#cfcfcf"/><circle cx="8.5" cy="9" r="1.6" fill="#333"/><circle cx="19.5" cy="17" r="1.6" fill="#333"/></svg>
<div class="a" style="left:1197px;top:852px;width:27px;height:25px;background:#5257a5;"></div>
<svg class="a" style="left:1197px;top:852px;" width="27" height="25" viewBox="0 0 27 25"><path d="M7 5 L20 19" stroke="#ddd" stroke-width="1.6"/><circle cx="9" cy="16" r="2.6" fill="#ddd"/><path d="M13 7 L17 11 L14 13 L20 20" stroke="#ddd" stroke-width="1.6" fill="none"/></svg>
<div class="a" style="left:1237px;top:852px;width:26px;height:25px;background:#373737;"></div>
<svg class="a" style="left:1237px;top:852px;" width="26" height="25" viewBox="0 0 26 25"><path d="M5 9.5 H9 L14 5 V20 L9 15.5 H5 Z" fill="#cfcfcf"/><path d="M17 8.5 A5 5 0 0 1 17 16.5 M19.5 6 A8 8 0 0 1 19.5 19" stroke="#cfcfcf" stroke-width="1.5" fill="none"/></svg>
<div class="a" style="left:1263px;top:852px;width:28px;height:25px;background:#5257a5;"></div>
<svg class="a" style="left:1263px;top:852px;" width="28" height="25" viewBox="0 0 28 25"><text x="14" y="11" font-family="Liberation Sans" font-size="9.5" fill="#ddd" text-anchor="middle">A</text><path d="M6 14 V19 M9.5 14 V19 M13 14 V19" stroke="#ddd" stroke-width="1.6"/><rect x="16" y="14" width="6" height="5" fill="#ddd"/></svg>
<svg class="a" style="left:1286px;top:872px;" width="4" height="4" viewBox="0 0 4 4"><path d="M4 0 V4 H0 Z" fill="#aaa"/></svg>
<div class="a" style="left:42px;top:881px;width:943px;height:126px;background:#262626;"></div>
<div class="a" style="left:42px;top:881px;width:1px;height:126px;background:#3a3a3a;"></div>
<svg class="a" style="left:49px;top:888px;" width="15" height="11" viewBox="0 0 15 11"><path d="M0 1 H15 M0 5.5 H15 M0 10 H15" stroke="#c8c8c8" stroke-width="1.8"/></svg>
<div class="t" style="left:73.7px;top:887.6px;font-size:12.3px;letter-spacing:-0.6px;color:#d0d0d0;">Create</div>
<div class="t" style="left:120.2px;top:887.6px;font-size:12.3px;letter-spacing:-0.6px;color:#d0d0d0;">Edit</div>
<div class="t" style="left:153.9px;top:887.6px;font-size:12.3px;letter-spacing:-0.6px;color:#d0d0d0;">View</div>
<div class="t" style="left:192.1px;top:887.6px;font-size:12.3px;letter-spacing:-0.6px;color:#d0d0d0;">Select</div>
<div class="t" style="left:235.9px;top:887.6px;font-size:12.3px;letter-spacing:-0.6px;color:#d0d0d0;">Material</div>
<div class="t" style="left:290.6px;top:887.6px;font-size:12.3px;letter-spacing:-0.6px;color:#d0d0d0;">Texture</div>
<svg class="a" style="left:44px;top:908px;" width="46" height="45" viewBox="0 0 46 45"><defs><pattern id="chk" width="6.4" height="6.4" patternUnits="userSpaceOnUse"><rect width="6.4" height="6.4" fill="#8e9196"/><rect width="3.2" height="3.2" fill="#b2b5ba"/><rect x="3.2" y="3.2" width="3.2" height="3.2" fill="#b2b5ba"/></pattern><linearGradient id="chkb" x1="0" y1="0" x2="0" y2="1"><stop offset="0.55" stop-color="#6a7a90" stop-opacity="0"/><stop offset="1" stop-color="#6a7a90" stop-opacity="0.35"/></linearGradient></defs><rect width="46" height="45" fill="url(#chk)"/><rect width="46" height="45" fill="url(#chkb)"/><defs><radialGradient id="m1" cx="0.6" cy="0.35" r="0.7"><stop offset="0" stop-color="#5a4a40"/><stop offset="0.7" stop-color="#2e2724"/><stop offset="1" stop-color="#1a1614"/></radialGradient></defs><circle cx="23" cy="23" r="19.5" fill="url(#m1)"/><path d="M13 9 C17 5, 26 4, 31 6" stroke="#a86a58" stroke-width="2.5" fill="none"/></svg>
<div class="t" style="left:46.5px;top:955.6px;font-size:12.3px;letter-spacing:-0.6px;color:#c0c0c0;">Rat</div>
<svg class="a" style="left:94px;top:908px;" width="46" height="45" viewBox="0 0 46 45"><defs><pattern id="chk" width="6.4" height="6.4" patternUnits="userSpaceOnUse"><rect width="6.4" height="6.4" fill="#8e9196"/><rect width="3.2" height="3.2" fill="#b2b5ba"/><rect x="3.2" y="3.2" width="3.2" height="3.2" fill="#b2b5ba"/></pattern><linearGradient id="chkb" x1="0" y1="0" x2="0" y2="1"><stop offset="0.55" stop-color="#6a7a90" stop-opacity="0"/><stop offset="1" stop-color="#6a7a90" stop-opacity="0.35"/></linearGradient></defs><rect width="46" height="45" fill="url(#chk)"/><rect width="46" height="45" fill="url(#chkb)"/><rect x="5" y="5" width="35.5" height="35" fill="#ffffff"/></svg>
<div class="t" style="left:96.5px;top:955.6px;font-size:12.3px;letter-spacing:-0.6px;color:#c0c0c0;">Softbox</div>
<svg class="a" style="left:144px;top:908px;" width="46" height="45" viewBox="0 0 46 45"><defs><pattern id="chk" width="6.4" height="6.4" patternUnits="userSpaceOnUse"><rect width="6.4" height="6.4" fill="#8e9196"/><rect width="3.2" height="3.2" fill="#b2b5ba"/><rect x="3.2" y="3.2" width="3.2" height="3.2" fill="#b2b5ba"/></pattern><linearGradient id="chkb" x1="0" y1="0" x2="0" y2="1"><stop offset="0.55" stop-color="#6a7a90" stop-opacity="0"/><stop offset="1" stop-color="#6a7a90" stop-opacity="0.35"/></linearGradient></defs><rect width="46" height="45" fill="url(#chk)"/><rect width="46" height="45" fill="url(#chkb)"/><circle cx="23" cy="22.5" r="20" fill="#ffffff"/></svg>
<div class="t" style="left:146.5px;top:955.6px;font-size:12.3px;letter-spacing:-0.6px;color:#c0c0c0;">Softbox</div>
<svg class="a" style="left:193px;top:908px;" width="46" height="45" viewBox="0 0 46 45"><defs><pattern id="chk" width="6.4" height="6.4" patternUnits="userSpaceOnUse"><rect width="6.4" height="6.4" fill="#8e9196"/><rect width="3.2" height="3.2" fill="#b2b5ba"/><rect x="3.2" y="3.2" width="3.2" height="3.2" fill="#b2b5ba"/></pattern><linearGradient id="chkb" x1="0" y1="0" x2="0" y2="1"><stop offset="0.55" stop-color="#6a7a90" stop-opacity="0"/><stop offset="1" stop-color="#6a7a90" stop-opacity="0.35"/></linearGradient></defs><rect width="46" height="45" fill="url(#chk)"/><rect width="46" height="45" fill="url(#chkb)"/><defs><radialGradient id="m4" cx="0.4" cy="0.35" r="0.7"><stop offset="0" stop-color="#4a4a4a"/><stop offset="0.6" stop-color="#1a1a1a"/><stop offset="1" stop-color="#0a0a0a"/></radialGradient></defs><circle cx="23" cy="22.5" r="20" fill="url(#m4)"/></svg>
<div class="t" style="left:195.5px;top:955.6px;font-size:12.3px;letter-spacing:-0.6px;color:#c0c0c0;">Black</div>
<svg class="a" style="left:243px;top:908px;" width="46" height="45" viewBox="0 0 46 45"><defs><pattern id="chk" width="6.4" height="6.4" patternUnits="userSpaceOnUse"><rect width="6.4" height="6.4" fill="#8e9196"/><rect width="3.2" height="3.2" fill="#b2b5ba"/><rect x="3.2" y="3.2" width="3.2" height="3.2" fill="#b2b5ba"/></pattern><linearGradient id="chkb" x1="0" y1="0" x2="0" y2="1"><stop offset="0.55" stop-color="#6a7a90" stop-opacity="0"/><stop offset="1" stop-color="#6a7a90" stop-opacity="0.35"/></linearGradient></defs><rect width="46" height="45" fill="url(#chk)"/><rect width="46" height="45" fill="url(#chkb)"/><circle cx="23" cy="22.5" r="20" fill="url(#m4)"/></svg>
<div class="t" style="left:245.5px;top:955.6px;font-size:12.3px;letter-spacing:-0.6px;color:#c0c0c0;">Mat</div>
<svg class="a" style="left:292px;top:908px;" width="46" height="45" viewBox="0 0 46 45"><defs><pattern id="chk" width="6.4" height="6.4" patternUnits="userSpaceOnUse"><rect width="6.4" height="6.4" fill="#8e9196"/><rect width="3.2" height="3.2" fill="#b2b5ba"/><rect x="3.2" y="3.2" width="3.2" height="3.2" fill="#b2b5ba"/></pattern><linearGradient id="chkb" x1="0" y1="0" x2="0" y2="1"><stop offset="0.55" stop-color="#6a7a90" stop-opacity="0"/><stop offset="1" stop-color="#6a7a90" stop-opacity="0.35"/></linearGradient></defs><rect width="46" height="45" fill="url(#chk)"/><rect width="46" height="45" fill="url(#chkb)"/><defs><radialGradient id="m6" cx="0.3" cy="0.4" r="0.8"><stop offset="0" stop-color="#ffffff"/><stop offset="0.5" stop-color="#e6e6e6"/><stop offset="1" stop-color="#9a9a9a"/></radialGradient></defs><circle cx="23" cy="22.5" r="20" fill="url(#m6)"/></svg>
<div class="t" style="left:294.5px;top:955.6px;font-size:12.3px;letter-spacing:-0.6px;color:#c0c0c0;">backrou</div>
<div class="a" style="left:44px;top:976px;width:941px;height:1px;background:#313131;"></div>
<div class="a" style="left:51px;top:984px;width:17px;height:17px;background:#333;border-radius:2px"></div>
<svg class="a" style="left:51px;top:984px;" width="17" height="17" viewBox="0 0 17 17"><path d="M4 5 H5.5 M4 8.5 H5.5 M4 12 H5.5 M7 5 H14 M7 8.5 H14 M7 12 H14" stroke="#ddd" stroke-width="1.6"/></svg>
<div class="a" style="left:69px;top:984px;width:17px;height:17px;background:#5257a5;"></div>
<svg class="a" style="left:69px;top:984px;" width="17" height="17" viewBox="0 0 17 17"><rect x="3.5" y="3.5" width="4" height="4" fill="#ddd"/><rect x="9.5" y="3.5" width="4" height="4" fill="#ddd"/><rect x="3.5" y="9.5" width="4" height="4" fill="#ddd"/><rect x="9.5" y="9.5" width="4" height="4" fill="#ddd"/></svg>
<div class="a" style="left:87px;top:984px;width:16px;height:17px;background:#333;border-radius:2px"></div>
<svg class="a" style="left:87px;top:984px;" width="16" height="17" viewBox="0 0 16 17"><rect x="5" y="3" width="9" height="9" fill="#bbb"/><path d="M3.5 5 V13.5 H12" stroke="#999" stroke-width="1.3" fill="none"/></svg>
<div class="a" style="left:917px;top:990px;width:60px;height:5px;background:#1e1e1e;border-radius:2px"></div>
<div class="a" style="left:917px;top:990px;width:20px;height:5px;background:#5a5ea8;border-radius:2px"></div>
<div class="a" style="left:936px;top:984px;width:2px;height:17px;background:#dddddd;"></div>
<div class="a" style="left:985px;top:881px;width:309px;height:126px;background:#2a2a2a;"></div>
<div class="a" style="left:985px;top:881px;width:1px;height:126px;background:#1e1e1e;"></div>
<svg class="a" style="left:992px;top:888px;" width="15" height="11" viewBox="0 0 15 11"><path d="M0 1 H15 M0 5.5 H15 M0 10 H15" stroke="#c8c8c8" stroke-width="1.8"/></svg>
<div class="a" style="left:1018px;top:886px;width:100px;height:17px;background:#303030;border-radius:8px"></div>
<div class="t" style="left:918px;width:300px;text-align:center;top:888.1px;font-size:12.3px;letter-spacing:-0.6px;color:#9a9a9a;">Reset Transform</div>
<div class="a" style="left:1124px;top:886px;width:94px;height:17px;background:#2e2e2e;border-radius:3px"></div>
<div class="t" style="left:1132px;top:888.1px;font-size:12.3px;letter-spacing:-0.6px;color:#9a9a9a;">World</div>
<svg class="a" style="left:1204px;top:890px;" width="8" height="6" viewBox="0 0 8 6"><path d="M1 1 L4 4 L7 1" stroke="#888" stroke-width="1.3" fill="none"/></svg>
<div class="a" style="left:1224px;top:886px;width:63px;height:17px;background:#2e2e2e;border-radius:3px"></div>
<div class="t" style="left:1231px;top:888.1px;font-size:12.3px;letter-spacing:-0.6px;color:#9a9a9a;">Scale</div>
<svg class="a" style="left:1273px;top:890px;" width="8" height="6" viewBox="0 0 8 6"><path d="M1 1 L4 4 L7 1" stroke="#888" stroke-width="1.3" fill="none"/></svg>
<div class="t" style="left:991px;top:912.6px;font-size:12px;letter-spacing:-0.2px;color:#b8b8b8;">X</div>
<div class="a" style="left:1006px;top:911px;width:89px;height:17px;background:#262626;border-radius:3px"></div>
<div class="a" style="left:1101px;top:911px;width:89px;height:17px;background:#262626;border-radius:3px"></div>
<div class="a" style="left:1198px;top:911px;width:89px;height:17px;background:#262626;border-radius:3px"></div>
<div class="t" style="left:899px;width:300px;text-align:center;top:913.1px;font-size:12px;letter-spacing:-0.5px;color:#777777;">0 cm</div>
<div class="t" style="left:995px;width:300px;text-align:center;top:913.1px;font-size:12px;letter-spacing:0px;color:#777777;">0 °</div>
<div class="t" style="left:1092px;width:300px;text-align:center;top:913.1px;font-size:12px;letter-spacing:-0.5px;color:#777777;">0 cm</div>
<div class="t" style="left:991px;top:934.6px;font-size:12px;letter-spacing:-0.2px;color:#b8b8b8;">Y</div>
<div class="a" style="left:1006px;top:933px;width:89px;height:17px;background:#262626;border-radius:3px"></div>
<div class="a" style="left:1101px;top:933px;width:89px;height:17px;background:#262626;border-radius:3px"></div>
<div class="a" style="left:1198px;top:933px;width:89px;height:17px;background:#262626;border-radius:3px"></div>
<div class="t" style="left:899px;width:300px;text-align:center;top:935.1px;font-size:12px;letter-spacing:-0.5px;color:#777777;">0 cm</div>
<div class="t" style="left:995px;width:300px;text-align:center;top:935.1px;font-size:12px;letter-spacing:0px;color:#777777;">0 °</div>
<div class="t" style="left:1092px;width:300px;text-align:center;top:935.1px;font-size:12px;letter-spacing:-0.5px;color:#777777;">0 cm</div>
<div class="t" style="left:991px;top:956.6px;font-size:12px;letter-spacing:-0.2px;color:#b8b8b8;">Z</div>
<div class="a" style="left:1006px;top:955px;width:89px;height:17px;background:#262626;border-radius:3px"></div>
<div class="a" style="left:1101px;top:955px;width:89px;height:17px;background:#262626;border-radius:3px"></div>
<div class="a" style="left:1198px;top:955px;width:89px;height:17px;background:#262626;border-radius:3px"></div>
<div class="t" style="left:899px;width:300px;text-align:center;top:957.1px;font-size:12px;letter-spacing:-0.5px;color:#777777;">0 cm</div>
<div class="t" style="left:995px;width:300px;text-align:center;top:957.1px;font-size:12px;letter-spacing:0px;color:#777777;">0 °</div>
<div class="t" style="left:1092px;width:300px;text-align:center;top:957.1px;font-size:12px;letter-spacing:-0.5px;color:#777777;">0 cm</div>
<div class="a" style="left:0px;top:1007px;width:1296px;height:24px;background:#1e1e1e;"></div>
<svg class="a" style="left:5px;top:1014px;" width="15" height="11" viewBox="0 0 15 11"><path d="M0 1 H15 M0 5.5 H15 M0 10 H15" stroke="#bdbdbd" stroke-width="1.6"/></svg>
<div class="a" style="left:1294px;top:76px;width:434px;height:955px;background:#1e1e1e;"></div>
<div class="a" style="left:1296px;top:77px;width:409px;height:443px;background:#2a2a2a;"></div>
<svg class="a" style="left:1301px;top:83px;" width="16" height="11" viewBox="0 0 16 11"><path d="M0 1 H16 M0 5.5 H16 M0 10 H16" stroke="#e8e8e8" stroke-width="2"/></svg>
<div class="t" style="left:1326.2px;top:82.6px;font-size:12.3px;letter-spacing:-0.6px;color:#d8d8d8;">File</div>
<div class="t" style="left:1357.2px;top:82.6px;font-size:12.3px;letter-spacing:-0.6px;color:#d0d0d0;">Edit</div>
<div class="t" style="left:1390.9px;top:82.6px;font-size:12.3px;letter-spacing:-0.6px;color:#d0d0d0;">View</div>
<div class="t" style="left:1429.4px;top:82.6px;font-size:12.3px;letter-spacing:-0.6px;color:#c9cc98;">Object</div>
<div class="t" style="left:1476.3px;top:82.6px;font-size:12.3px;letter-spacing:-0.6px;color:#d0d0d0;">Tags</div>
<div class="t" style="left:1512.6px;top:82.6px;font-size:12.3px;letter-spacing:-0.6px;color:#d0d0d0;">Bookmarks</div>
<svg class="a" style="left:1627px;top:83px;" width="14" height="14" viewBox="0 0 14 14"><circle cx="5.5" cy="5.5" r="4.3" fill="none" stroke="#b8b8b8" stroke-width="1.5"/><path d="M8.5 8.5 L13 13" stroke="#b8b8b8" stroke-width="1.8"/></svg>
<svg class="a" style="left:1647px;top:83px;" width="14" height="14" viewBox="0 0 14 14"><path d="M1.5 6.5 L7 1.5 L12.5 6.5 V13 H9 V9 H5 V13 H1.5 Z" fill="none" stroke="#b8b8b8" stroke-width="1.5"/></svg>
<svg class="a" style="left:1667px;top:84px;" width="14" height="12" viewBox="0 0 14 12"><path d="M0 1 H14 M2.5 5 H11.5 M5 9 H9" stroke="#b8b8b8" stroke-width="1.8"/></svg>
<svg class="a" style="left:1687px;top:83px;" width="14" height="14" viewBox="0 0 14 14"><path d="M6 1 H1 V13 H13 V8" fill="none" stroke="#b8b8b8" stroke-width="1.5"/><path d="M6 8 L13 1 M8.5 1 H13 V5.5" fill="none" stroke="#b8b8b8" stroke-width="1.5"/></svg>
<div class="a" style="left:1296px;top:102px;width:407px;height:20px;background:#232323;"></div>
<div class="a" style="left:1411px;top:101px;width:2px;height:419px;background:#1e1e1e;"></div>
<svg class="a" style="left:1296px;top:102px;" width="110" height="20" viewBox="0 0 110 20"><path d="M7.5 0 V20" stroke="#4a4a4a" stroke-width="1"/><rect x="2.5" y="5.5" width="10" height="10" fill="#2a2a2a" stroke="#6a6a6a" stroke-width="1"/><path d="M4.5 10.5 H10.5 M7.5 7.5 V13.5" stroke="#8a8a8a" stroke-width="1"/><path d="M13 10.5 H17" stroke="#5a5a5a" stroke-width="1"/><path d="M19 4 V16 H30" stroke="#d0d0d8" stroke-width="1.6" fill="none"/><circle cx="27" cy="7.5" r="4.5" fill="#c8d0ff"/><path d="M28 14 L31 16 L28 18" stroke="#d0d0d8" stroke-width="1.2" fill="none"/></svg>
<div class="t" style="left:1331.3px;top:106.6px;font-size:12.3px;letter-spacing:-0.6px;color:#c8c8c8;">Rat</div>
<svg class="a" style="left:1375px;top:105px;" width="16" height="14" viewBox="0 0 16 14"><path d="M7 1 L13 5 L7 9 L1 5 Z" fill="#6a6a6a"/><path d="M1 8 L7 12 L13 8" stroke="#5a5a5a" stroke-width="1.5" fill="none"/></svg>
<svg class="a" style="left:1391px;top:105px;" width="8" height="15" viewBox="0 0 8 15"><circle cx="4" cy="3.5" r="2.8" fill="#5a5a5a"/><circle cx="4" cy="10.5" r="2.8" fill="#5a5a5a"/></svg>
<svg class="a" style="left:1296px;top:122px;" width="110" height="20" viewBox="0 0 110 20"><path d="M7.5 0 V20" stroke="#4a4a4a" stroke-width="1"/><rect x="2.5" y="5.5" width="10" height="10" fill="#2a2a2a" stroke="#6a6a6a" stroke-width="1"/><path d="M4.5 10.5 H10.5 M7.5 7.5 V13.5" stroke="#8a8a8a" stroke-width="1"/><path d="M13 10.5 H17" stroke="#5a5a5a" stroke-width="1"/><path d="M19 4 V16 H30" stroke="#d0d0d8" stroke-width="1.6" fill="none"/><circle cx="27" cy="7.5" r="4.5" fill="#c8d0ff"/><path d="M28 14 L31 16 L28 18" stroke="#d0d0d8" stroke-width="1.2" fill="none"/></svg>
<div class="t" style="left:1331.3px;top:126.6px;font-size:12.3px;letter-spacing:-0.6px;color:#c8c8c8;">Render</div>
<svg class="a" style="left:1375px;top:125px;" width="16" height="14" viewBox="0 0 16 14"><path d="M7 1 L13 5 L7 9 L1 5 Z" fill="#6a6a6a"/><path d="M1 8 L7 12 L13 8" stroke="#5a5a5a" stroke-width="1.5" fill="none"/></svg>
<svg class="a" style="left:1391px;top:125px;" width="8" height="15" viewBox="0 0 8 15"><circle cx="4" cy="3.5" r="2.8" fill="#5a5a5a"/><circle cx="4" cy="10.5" r="2.8" fill="#5a5a5a"/></svg>
<div class="a" style="left:1296px;top:522px;width:409px;height:509px;background:#2a2a2a;"></div>
<svg class="a" style="left:1301px;top:528px;" width="16" height="11" viewBox="0 0 16 11"><path d="M0 1 H16 M0 5.5 H16 M0 10 H16" stroke="#c8c8c8" stroke-width="1.8"/></svg>
<div class="t" style="left:1326px;top:527.1px;font-size:12.3px;letter-spacing:-0.6px;color:#d0d0d0;">Mode</div>
<div class="t" style="left:1369.6px;top:527.1px;font-size:12.3px;letter-spacing:-0.6px;color:#d0d0d0;">Edit</div>
<div class="t" style="left:1403px;top:527.1px;font-size:12.3px;letter-spacing:-0.6px;color:#d0d0d0;">User Data</div>
<svg class="a" style="left:1546px;top:526px;" width="14" height="14" viewBox="0 0 14 14"><path d="M13 7 H2 M7 2 L2 7 L7 12" stroke="#b8b8b8" stroke-width="1.6" fill="none"/></svg>
<svg class="a" style="left:1566px;top:526px;" width="14" height="14" viewBox="0 0 14 14"><path d="M1 7 H12 M7 2 L12 7 L7 12" stroke="#4e4e4e" stroke-width="1.6" fill="none"/></svg>
<svg class="a" style="left:1586px;top:526px;" width="14" height="14" viewBox="0 0 14 14"><path d="M7 13 V2 M2 7 L7 2 L12 7" stroke="#4e4e4e" stroke-width="1.6" fill="none"/></svg>
<svg class="a" style="left:1607px;top:526px;" width="14" height="14" viewBox="0 0 14 14"><circle cx="5.5" cy="5.5" r="4.3" fill="none" stroke="#b8b8b8" stroke-width="1.5"/><path d="M8.5 8.5 L13 13" stroke="#b8b8b8" stroke-width="1.8"/></svg>
<svg class="a" style="left:1627px;top:527px;" width="14" height="12" viewBox="0 0 14 12"><path d="M0 1 H14 M2.5 5 H11.5 M5 9 H9" stroke="#b8b8b8" stroke-width="1.8"/></svg>
<svg class="a" style="left:1648px;top:526px;" width="13" height="15" viewBox="0 0 13 15"><rect x="1" y="7" width="11" height="7" fill="none" stroke="#b8b8b8" stroke-width="1.5"/><path d="M3 7 V4.5 A3.5 3.5 0 0 1 10 4.5 V7" stroke="#b8b8b8" stroke-width="1.5" fill="none"/></svg>
<svg class="a" style="left:1667px;top:525px;" width="16" height="16" viewBox="0 0 16 16"><circle cx="8" cy="8" r="7" fill="none" stroke="#b8b8b8" stroke-width="1.5"/><circle cx="8" cy="8" r="2.2" fill="none" stroke="#b8b8b8" stroke-width="1.3"/></svg>
<svg class="a" style="left:1688px;top:526px;" width="14" height="14" viewBox="0 0 14 14"><path d="M6 1 H1 V13 H13 V8" fill="none" stroke="#b8b8b8" stroke-width="1.5"/><path d="M6 8 L13 1 M8.5 1 H13 V5.5" fill="none" stroke="#b8b8b8" stroke-width="1.5"/></svg>
<div class="a" style="left:1672px;top:550px;width:30px;height:19px;background:#2f2f2f;border-radius:9px"></div>
<div class="a" style="left:1705px;top:76px;width:23px;height:62px;background:#2a2a2a;"></div>
<div class="a" style="left:1705px;top:522px;width:23px;height:71px;background:#2a2a2a;"></div>
<div class="t" style="left:1710px;top:89px;font-size:12.3px;letter-spacing:-0.5px;color:#e0e0e0;writing-mode:vertical-rl;line-height:1">Objects</div>
<div class="t" style="left:1710px;top:150px;font-size:12.3px;letter-spacing:-0.5px;color:#9a9a9a;writing-mode:vertical-rl;line-height:1">Takes</div>
<div class="t" style="left:1710px;top:202px;font-size:12.3px;letter-spacing:-0.5px;color:#9a9a9a;writing-mode:vertical-rl;line-height:1">Asset Browser</div>
<div class="t" style="left:1710px;top:533px;font-size:12.3px;letter-spacing:-0.5px;color:#e6e6e6;writing-mode:vertical-rl;line-height:1">Attributes</div>
<div class="t" style="left:1710px;top:606px;font-size:12.3px;letter-spacing:-0.5px;color:#9a9a9a;writing-mode:vertical-rl;line-height:1">Layers</div>
<div class="t" style="left:1710px;top:662px;font-size:12.3px;letter-spacing:-0.5px;color:#9a9a9a;writing-mode:vertical-rl;line-height:1">Structure</div>
<div class="a" style="left:0;top:1031px;width:1728px;height:49px;background:linear-gradient(90deg,#232328 0%,#242328 13%,#2a2321 16%,#272426 19%,#282322 25%,#2c2521 40%,#2a2422 47%,#262529 55%,#2a2622 61%,#2a2623 74%,#242426 80%,#232325 100%)"></div>
<svg class="a" style="left:786px;top:1044px;" width="24" height="24" viewBox="0 0 24 24"><defs><linearGradient id="wl" x1="0" y1="0" x2="1" y2="1"><stop offset="0" stop-color="#6ad4ff"/><stop offset="1" stop-color="#1a8ef0"/></linearGradient></defs><rect x="0" y="0" width="11.3" height="11.3" rx="1" fill="url(#wl)"/><rect x="12.7" y="0" width="11.3" height="11.3" rx="1" fill="url(#wl)"/><rect x="0" y="12.7" width="11.3" height="11.3" rx="1" fill="url(#wl)"/><rect x="12.7" y="12.7" width="11.3" height="11.3" rx="1" fill="url(#wl)"/></svg>
<svg class="a" style="left:830px;top:1045px;" width="25" height="22" viewBox="0 0 25 22"><path d="M0 2 Q0 0 2 0 H9 L11 3 H23 Q25 3 25 5 V20 Q25 22 23 22 H2 Q0 22 0 20 Z" fill="#f0b828"/><rect x="0" y="6" width="25" height="16" rx="1.5" fill="#ffd04a"/><rect x="6" y="14" width="13" height="8" rx="1.5" fill="#1a70c8"/></svg>
<svg class="a" style="left:874px;top:1044px;" width="25" height="25" viewBox="0 0 25 25"><circle cx="12.5" cy="12.5" r="12" fill="#dd4433"/><path d="M12.5 12.5 L2.1 6.5 A12 12 0 0 1 22.9 6.5 Z" fill="#dd4433"/><path d="M12.5 12.5 L22.9 6.5 A12 12 0 0 1 12.5 24.5 Z" fill="#f6c020"/><path d="M12.5 12.5 L12.5 24.5 A12 12 0 0 1 2.1 6.5 Z" fill="#2aa44a"/><circle cx="12.5" cy="12.5" r="5.6" fill="#fff"/><circle cx="12.5" cy="12.5" r="4.4" fill="#3a7ee8"/></svg>
<svg class="a" style="left:918px;top:1043px;" width="25" height="25" viewBox="0 0 25 25"><defs><radialGradient id="c4" cx="0.55" cy="0.45" r="0.6"><stop offset="0" stop-color="#6a70d0"/><stop offset="0.6" stop-color="#1a1f80"/><stop offset="1" stop-color="#0a0c30"/></radialGradient></defs><circle cx="12.5" cy="12.5" r="12" fill="#d8dce8"/><circle cx="12.5" cy="12.5" r="10.5" fill="url(#c4)"/><path d="M4 15 A9 9 0 0 0 21 17" stroke="#e8ecff" stroke-width="2.2" fill="none"/></svg>
<div class="a" style="left:840px;top:1073px;width:6px;height:3px;background:#9a9a9a;border-radius:2px"></div>
<div class="a" style="left:884px;top:1073px;width:6px;height:3px;background:#9a9a9a;border-radius:2px"></div>
<div class="a" style="left:928px;top:1073px;width:6px;height:3px;background:#9a9a9a;border-radius:2px"></div>
<svg class="a" style="left:1499px;top:1051px;" width="12" height="7" viewBox="0 0 12 7"><path d="M1 6.5 L6 1.5 L11 6.5" stroke="#e0e0e0" stroke-width="1.2" fill="none"/></svg>
<div class="t" style="left:1528px;top:1049.5px;font-size:12.8px;letter-spacing:-0.5px;color:#f0f0f0;">ENG</div>
<svg class="a" style="left:1570px;top:1047px;" width="17" height="17" viewBox="0 0 17 17"><rect x="0.6" y="1.6" width="12" height="9" fill="none" stroke="#eee" stroke-width="1.1"/><path d="M3 14.5 H10 M6.5 10.5 V14.5" stroke="#eee" stroke-width="1.1"/><rect x="12" y="0.6" width="3.6" height="6" rx="1.5" fill="#262626" stroke="#eee" stroke-width="1"/><path d="M13.8 7 V15" stroke="#eee" stroke-width="1"/></svg>
<svg class="a" style="left:1594px;top:1049px;" width="17" height="13" viewBox="0 0 17 13"><path d="M1 4.5 H4 L8 1 V12 L4 8.5 H1 Z" fill="none" stroke="#eee" stroke-width="1.1"/><path d="M10.5 4 L15 9 M15 4 L10.5 9" stroke="#eee" stroke-width="1.1"/></svg>
<svg class="a" style="left:1618px;top:1048px;" width="18" height="15" viewBox="0 0 18 15"><rect x="5" y="3.5" width="10" height="8" rx="1.5" fill="none" stroke="#eee" stroke-width="1.1"/><rect x="15.5" y="6" width="1.5" height="3" fill="#eee"/><path d="M1 2 V6 H5 V2 M2 0 V2 M4 0 V2 M3 6 V12" stroke="#eee" stroke-width="1.1" fill="none"/><path d="M7 10 L10 5 H12" stroke="#eee" stroke-width="1"/></svg>
<div class="t" style="left:1600px;width:108px;text-align:right;top:1041.6px;font-size:12.3px;letter-spacing:-0.3px;color:#f0f0f0">11:23</div>
<div class="t" style="left:1600px;width:108px;text-align:right;top:1057.4px;font-size:12.3px;letter-spacing:-0.2px;color:#f0f0f0">22.09.2022</div>
</body></html>
